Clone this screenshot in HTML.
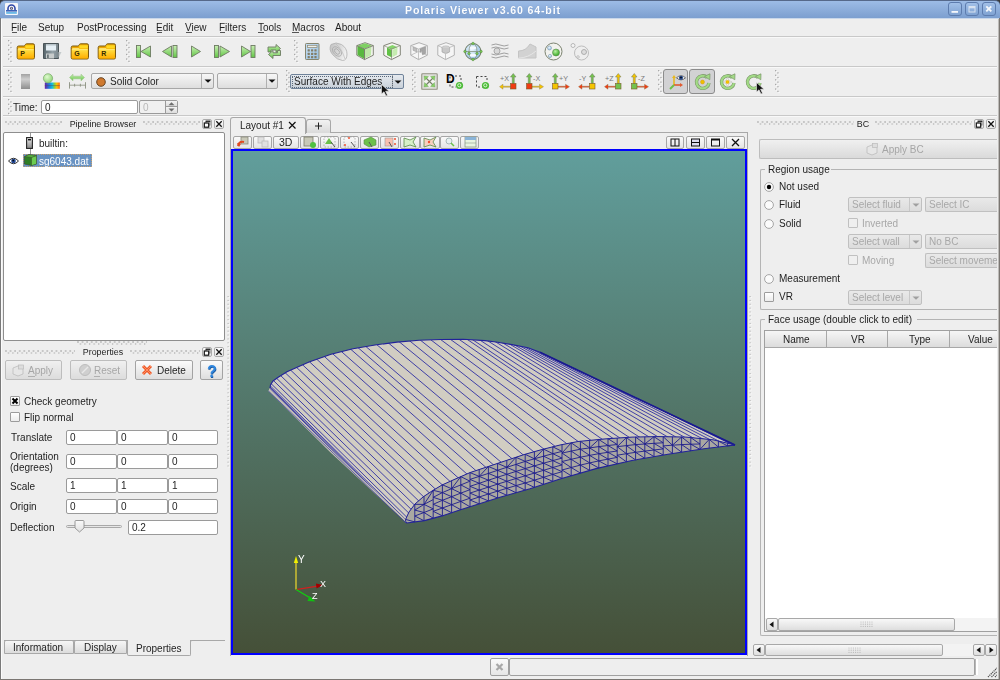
<!DOCTYPE html><html><head><meta charset="utf-8"><style>
*{margin:0;padding:0;box-sizing:border-box}
html,body{width:1000px;height:680px;overflow:hidden;background:#eeeeee;font-family:"Liberation Sans",sans-serif}
body>div,.a{position:absolute}
.t{position:absolute;white-space:pre;will-change:transform}
.btn{position:absolute;border:1px solid #a3a3a3;border-radius:2px;background:linear-gradient(#fbfbfb,#e3e3e3)}
.inp{position:absolute;border:1px solid #9a9a9a;border-radius:2px;background:#fff}
.hl{position:absolute;height:1px;background:#c6c6c6}
svg{position:absolute;overflow:visible}
</style></head><body><svg width="0" height="0" style="position:absolute"><defs>
<linearGradient id="gfold" x1="0" y1="0" x2="0" y2="1"><stop offset="0" stop-color="#ffe680"/><stop offset="0.45" stop-color="#ffc61a"/><stop offset="1" stop-color="#f5a300"/></linearGradient>
<linearGradient id="ggreen" x1="0" y1="0" x2="0" y2="1"><stop offset="0" stop-color="#c9efb4"/><stop offset="1" stop-color="#62c646"/></linearGradient>
<linearGradient id="ggray" x1="0" y1="0" x2="0" y2="1"><stop offset="0" stop-color="#dadada"/><stop offset="1" stop-color="#8f8f8f"/></linearGradient>
<radialGradient id="gball" cx="0.4" cy="0.35" r="0.6"><stop offset="0" stop-color="#b8f0a0"/><stop offset="1" stop-color="#3fae2a"/></radialGradient>
<radialGradient id="gblue" cx="0.4" cy="0.35" r="0.6"><stop offset="0" stop-color="#f0f8ff"/><stop offset="1" stop-color="#9cc4e4"/></radialGradient>
<linearGradient id="gbtn" x1="0" y1="0" x2="0" y2="1"><stop offset="0" stop-color="#fafafa"/><stop offset="1" stop-color="#e0e0e0"/></linearGradient>
</defs></svg><div style="left:0px;top:0px;width:1000px;height:8px;background:#3a3a3a"></div>
<div style="left:0px;top:0px;width:1000px;height:19px;background:linear-gradient(#9dbce6,#7a9dce);border-top:1px solid #56698a;border-radius:5px 5px 0 0"></div>
<div style="left:0px;top:18px;width:1000px;height:1px;background:#c9d7ea"></div>
<div style="left:5px;top:3px;width:13px;height:12px;background:#f6f7f9;border-radius:1px"></div>
<svg style="left:5px;top:3px" width="13" height="12" viewBox="0 0 13 12"><path d="M3 7.5 L3 5.5 A3.5 3.5 0 0 1 10 5.5 L10 7.5" fill="none" stroke="#3048a8" stroke-width="1.6"/><circle cx="6.5" cy="5.3" r="1.5" fill="#4a4a6a"/><circle cx="6.5" cy="5.3" r="0.7" fill="#c8c8d8"/><rect x="1" y="7" width="11" height="1.6" fill="#3a62b8"/><rect x="1.2" y="9.3" width="10.6" height="1.3" fill="#30a0e0"/></svg>
<div class="t" style="left:405px;top:4.73px;font-size:10.6px;line-height:10.6px;color:#fbfdff;font-weight:bold;letter-spacing:0.85px;text-shadow:0 0 1px #6d8cbc">Polaris Viewer v3.60 64-bit</div>
<div style="left:948px;top:2px;width:13.5px;height:14px;border:1px solid #5d7cae;border-radius:3px;background:linear-gradient(#a2c0e8,#7fa2d2)"></div>
<div style="left:965px;top:2px;width:13.5px;height:14px;border:1px solid #5d7cae;border-radius:3px;background:linear-gradient(#a2c0e8,#7fa2d2)"></div>
<div style="left:982px;top:2px;width:13.5px;height:14px;border:1px solid #5d7cae;border-radius:3px;background:linear-gradient(#a2c0e8,#7fa2d2)"></div>
<svg style="left:948px;top:2px" width="14" height="14"><rect x="3.5" y="9" width="6.5" height="1.8" fill="#f4f7fb"/></svg>
<svg style="left:965px;top:2px" width="14" height="14"><rect x="4" y="4.5" width="6" height="5.5" fill="none" stroke="#d8e2f0" stroke-width="1"/><rect x="4" y="4.5" width="6" height="1.8" fill="#d8e2f0"/></svg>
<svg style="left:982px;top:2px" width="14" height="14"><path d="M4.3 4.3 L9.3 9.3 M9.3 4.3 L4.3 9.3" stroke="#f4f7fb" stroke-width="1.9"/></svg>
<div style="left:0px;top:18px;width:1px;height:662px;background:#7a7a7a"></div>
<div style="left:1px;top:19px;width:1px;height:660px;background:#fbfbfb"></div>
<div style="left:999px;top:18px;width:1px;height:662px;background:#7a7a7a"></div>
<div style="left:0px;top:679px;width:1000px;height:1px;background:#7a7a7a"></div>
<div class="t" style="left:11px;top:22.73px;font-size:10px;line-height:10px;color:#1e1e1e;">File</div>
<div class="t" style="left:37.5px;top:22.73px;font-size:10px;line-height:10px;color:#1e1e1e;">Setup</div>
<div class="t" style="left:76.5px;top:22.73px;font-size:10px;line-height:10px;color:#1e1e1e;">PostProcessing</div>
<div class="t" style="left:156px;top:22.73px;font-size:10px;line-height:10px;color:#1e1e1e;">Edit</div>
<div class="t" style="left:185px;top:22.73px;font-size:10px;line-height:10px;color:#1e1e1e;">View</div>
<div class="t" style="left:219px;top:22.73px;font-size:10px;line-height:10px;color:#1e1e1e;">Filters</div>
<div class="t" style="left:257.5px;top:22.73px;font-size:10px;line-height:10px;color:#1e1e1e;">Tools</div>
<div class="t" style="left:291.5px;top:22.73px;font-size:10px;line-height:10px;color:#1e1e1e;">Macros</div>
<div class="t" style="left:335px;top:22.73px;font-size:10px;line-height:10px;color:#1e1e1e;">About</div>
<div style="left:11.5px;top:31.5px;width:5px;height:1px;background:#555"></div>
<div style="left:156.5px;top:31.5px;width:5.5px;height:1px;background:#555"></div>
<div style="left:185.5px;top:31.5px;width:6px;height:1px;background:#555"></div>
<div style="left:219.5px;top:31.5px;width:5px;height:1px;background:#555"></div>
<div style="left:258px;top:31.5px;width:5.5px;height:1px;background:#555"></div>
<div style="left:292px;top:31.5px;width:7px;height:1px;background:#555"></div>
<div style="left:3px;top:36px;width:995px;height:1px;background:#c8c8c8"></div>
<div style="left:3px;top:37px;width:995px;height:1px;background:#f8f8f8"></div>
<div style="left:3px;top:66px;width:995px;height:1px;background:#c8c8c8"></div>
<div style="left:3px;top:67px;width:995px;height:1px;background:#f8f8f8"></div>
<div style="left:3px;top:96px;width:995px;height:1px;background:#c8c8c8"></div>
<div style="left:3px;top:97px;width:995px;height:1px;background:#f8f8f8"></div>
<div style="left:3px;top:115px;width:995px;height:1px;background:#c8c8c8"></div>
<div style="left:3px;top:116px;width:995px;height:1px;background:#f8f8f8"></div>
<svg style="left:8px;top:40px;" width="5" height="24" viewBox="0 0 5 24"><rect x="0" y="0.0" width="1.3" height="1.3" fill="#a8a8a8"/><rect x="1.2" y="1.2" width="1" height="1" fill="#ffffff"/><rect x="2.3" y="2.3" width="1.3" height="1.3" fill="#a8a8a8"/><rect x="3.5" y="3.5" width="1" height="1" fill="#ffffff"/><rect x="0" y="4.6" width="1.3" height="1.3" fill="#a8a8a8"/><rect x="1.2" y="5.8" width="1" height="1" fill="#ffffff"/><rect x="2.3" y="6.9" width="1.3" height="1.3" fill="#a8a8a8"/><rect x="3.5" y="8.1" width="1" height="1" fill="#ffffff"/><rect x="0" y="9.2" width="1.3" height="1.3" fill="#a8a8a8"/><rect x="1.2" y="10.4" width="1" height="1" fill="#ffffff"/><rect x="2.3" y="11.5" width="1.3" height="1.3" fill="#a8a8a8"/><rect x="3.5" y="12.7" width="1" height="1" fill="#ffffff"/><rect x="0" y="13.8" width="1.3" height="1.3" fill="#a8a8a8"/><rect x="1.2" y="15.0" width="1" height="1" fill="#ffffff"/><rect x="2.3" y="16.1" width="1.3" height="1.3" fill="#a8a8a8"/><rect x="3.5" y="17.3" width="1" height="1" fill="#ffffff"/><rect x="0" y="18.4" width="1.3" height="1.3" fill="#a8a8a8"/><rect x="1.2" y="19.6" width="1" height="1" fill="#ffffff"/><rect x="2.3" y="20.7" width="1.3" height="1.3" fill="#a8a8a8"/><rect x="3.5" y="21.9" width="1" height="1" fill="#ffffff"/></svg>
<svg style="left:126px;top:40px;" width="5" height="24" viewBox="0 0 5 24"><rect x="0" y="0.0" width="1.3" height="1.3" fill="#a8a8a8"/><rect x="1.2" y="1.2" width="1" height="1" fill="#ffffff"/><rect x="2.3" y="2.3" width="1.3" height="1.3" fill="#a8a8a8"/><rect x="3.5" y="3.5" width="1" height="1" fill="#ffffff"/><rect x="0" y="4.6" width="1.3" height="1.3" fill="#a8a8a8"/><rect x="1.2" y="5.8" width="1" height="1" fill="#ffffff"/><rect x="2.3" y="6.9" width="1.3" height="1.3" fill="#a8a8a8"/><rect x="3.5" y="8.1" width="1" height="1" fill="#ffffff"/><rect x="0" y="9.2" width="1.3" height="1.3" fill="#a8a8a8"/><rect x="1.2" y="10.4" width="1" height="1" fill="#ffffff"/><rect x="2.3" y="11.5" width="1.3" height="1.3" fill="#a8a8a8"/><rect x="3.5" y="12.7" width="1" height="1" fill="#ffffff"/><rect x="0" y="13.8" width="1.3" height="1.3" fill="#a8a8a8"/><rect x="1.2" y="15.0" width="1" height="1" fill="#ffffff"/><rect x="2.3" y="16.1" width="1.3" height="1.3" fill="#a8a8a8"/><rect x="3.5" y="17.3" width="1" height="1" fill="#ffffff"/><rect x="0" y="18.4" width="1.3" height="1.3" fill="#a8a8a8"/><rect x="1.2" y="19.6" width="1" height="1" fill="#ffffff"/><rect x="2.3" y="20.7" width="1.3" height="1.3" fill="#a8a8a8"/><rect x="3.5" y="21.9" width="1" height="1" fill="#ffffff"/></svg>
<svg style="left:293.5px;top:40px;" width="5" height="24" viewBox="0 0 5 24"><rect x="0" y="0.0" width="1.3" height="1.3" fill="#a8a8a8"/><rect x="1.2" y="1.2" width="1" height="1" fill="#ffffff"/><rect x="2.3" y="2.3" width="1.3" height="1.3" fill="#a8a8a8"/><rect x="3.5" y="3.5" width="1" height="1" fill="#ffffff"/><rect x="0" y="4.6" width="1.3" height="1.3" fill="#a8a8a8"/><rect x="1.2" y="5.8" width="1" height="1" fill="#ffffff"/><rect x="2.3" y="6.9" width="1.3" height="1.3" fill="#a8a8a8"/><rect x="3.5" y="8.1" width="1" height="1" fill="#ffffff"/><rect x="0" y="9.2" width="1.3" height="1.3" fill="#a8a8a8"/><rect x="1.2" y="10.4" width="1" height="1" fill="#ffffff"/><rect x="2.3" y="11.5" width="1.3" height="1.3" fill="#a8a8a8"/><rect x="3.5" y="12.7" width="1" height="1" fill="#ffffff"/><rect x="0" y="13.8" width="1.3" height="1.3" fill="#a8a8a8"/><rect x="1.2" y="15.0" width="1" height="1" fill="#ffffff"/><rect x="2.3" y="16.1" width="1.3" height="1.3" fill="#a8a8a8"/><rect x="3.5" y="17.3" width="1" height="1" fill="#ffffff"/><rect x="0" y="18.4" width="1.3" height="1.3" fill="#a8a8a8"/><rect x="1.2" y="19.6" width="1" height="1" fill="#ffffff"/><rect x="2.3" y="20.7" width="1.3" height="1.3" fill="#a8a8a8"/><rect x="3.5" y="21.9" width="1" height="1" fill="#ffffff"/></svg>
<svg style="left:8px;top:70px;" width="5" height="24" viewBox="0 0 5 24"><rect x="0" y="0.0" width="1.3" height="1.3" fill="#a8a8a8"/><rect x="1.2" y="1.2" width="1" height="1" fill="#ffffff"/><rect x="2.3" y="2.3" width="1.3" height="1.3" fill="#a8a8a8"/><rect x="3.5" y="3.5" width="1" height="1" fill="#ffffff"/><rect x="0" y="4.6" width="1.3" height="1.3" fill="#a8a8a8"/><rect x="1.2" y="5.8" width="1" height="1" fill="#ffffff"/><rect x="2.3" y="6.9" width="1.3" height="1.3" fill="#a8a8a8"/><rect x="3.5" y="8.1" width="1" height="1" fill="#ffffff"/><rect x="0" y="9.2" width="1.3" height="1.3" fill="#a8a8a8"/><rect x="1.2" y="10.4" width="1" height="1" fill="#ffffff"/><rect x="2.3" y="11.5" width="1.3" height="1.3" fill="#a8a8a8"/><rect x="3.5" y="12.7" width="1" height="1" fill="#ffffff"/><rect x="0" y="13.8" width="1.3" height="1.3" fill="#a8a8a8"/><rect x="1.2" y="15.0" width="1" height="1" fill="#ffffff"/><rect x="2.3" y="16.1" width="1.3" height="1.3" fill="#a8a8a8"/><rect x="3.5" y="17.3" width="1" height="1" fill="#ffffff"/><rect x="0" y="18.4" width="1.3" height="1.3" fill="#a8a8a8"/><rect x="1.2" y="19.6" width="1" height="1" fill="#ffffff"/><rect x="2.3" y="20.7" width="1.3" height="1.3" fill="#a8a8a8"/><rect x="3.5" y="21.9" width="1" height="1" fill="#ffffff"/></svg>
<svg style="left:286px;top:70px;" width="5" height="24" viewBox="0 0 5 24"><rect x="0" y="0.0" width="1.3" height="1.3" fill="#a8a8a8"/><rect x="1.2" y="1.2" width="1" height="1" fill="#ffffff"/><rect x="2.3" y="2.3" width="1.3" height="1.3" fill="#a8a8a8"/><rect x="3.5" y="3.5" width="1" height="1" fill="#ffffff"/><rect x="0" y="4.6" width="1.3" height="1.3" fill="#a8a8a8"/><rect x="1.2" y="5.8" width="1" height="1" fill="#ffffff"/><rect x="2.3" y="6.9" width="1.3" height="1.3" fill="#a8a8a8"/><rect x="3.5" y="8.1" width="1" height="1" fill="#ffffff"/><rect x="0" y="9.2" width="1.3" height="1.3" fill="#a8a8a8"/><rect x="1.2" y="10.4" width="1" height="1" fill="#ffffff"/><rect x="2.3" y="11.5" width="1.3" height="1.3" fill="#a8a8a8"/><rect x="3.5" y="12.7" width="1" height="1" fill="#ffffff"/><rect x="0" y="13.8" width="1.3" height="1.3" fill="#a8a8a8"/><rect x="1.2" y="15.0" width="1" height="1" fill="#ffffff"/><rect x="2.3" y="16.1" width="1.3" height="1.3" fill="#a8a8a8"/><rect x="3.5" y="17.3" width="1" height="1" fill="#ffffff"/><rect x="0" y="18.4" width="1.3" height="1.3" fill="#a8a8a8"/><rect x="1.2" y="19.6" width="1" height="1" fill="#ffffff"/><rect x="2.3" y="20.7" width="1.3" height="1.3" fill="#a8a8a8"/><rect x="3.5" y="21.9" width="1" height="1" fill="#ffffff"/></svg>
<svg style="left:412px;top:70px;" width="5" height="24" viewBox="0 0 5 24"><rect x="0" y="0.0" width="1.3" height="1.3" fill="#a8a8a8"/><rect x="1.2" y="1.2" width="1" height="1" fill="#ffffff"/><rect x="2.3" y="2.3" width="1.3" height="1.3" fill="#a8a8a8"/><rect x="3.5" y="3.5" width="1" height="1" fill="#ffffff"/><rect x="0" y="4.6" width="1.3" height="1.3" fill="#a8a8a8"/><rect x="1.2" y="5.8" width="1" height="1" fill="#ffffff"/><rect x="2.3" y="6.9" width="1.3" height="1.3" fill="#a8a8a8"/><rect x="3.5" y="8.1" width="1" height="1" fill="#ffffff"/><rect x="0" y="9.2" width="1.3" height="1.3" fill="#a8a8a8"/><rect x="1.2" y="10.4" width="1" height="1" fill="#ffffff"/><rect x="2.3" y="11.5" width="1.3" height="1.3" fill="#a8a8a8"/><rect x="3.5" y="12.7" width="1" height="1" fill="#ffffff"/><rect x="0" y="13.8" width="1.3" height="1.3" fill="#a8a8a8"/><rect x="1.2" y="15.0" width="1" height="1" fill="#ffffff"/><rect x="2.3" y="16.1" width="1.3" height="1.3" fill="#a8a8a8"/><rect x="3.5" y="17.3" width="1" height="1" fill="#ffffff"/><rect x="0" y="18.4" width="1.3" height="1.3" fill="#a8a8a8"/><rect x="1.2" y="19.6" width="1" height="1" fill="#ffffff"/><rect x="2.3" y="20.7" width="1.3" height="1.3" fill="#a8a8a8"/><rect x="3.5" y="21.9" width="1" height="1" fill="#ffffff"/></svg>
<svg style="left:658px;top:70px;" width="5" height="24" viewBox="0 0 5 24"><rect x="0" y="0.0" width="1.3" height="1.3" fill="#a8a8a8"/><rect x="1.2" y="1.2" width="1" height="1" fill="#ffffff"/><rect x="2.3" y="2.3" width="1.3" height="1.3" fill="#a8a8a8"/><rect x="3.5" y="3.5" width="1" height="1" fill="#ffffff"/><rect x="0" y="4.6" width="1.3" height="1.3" fill="#a8a8a8"/><rect x="1.2" y="5.8" width="1" height="1" fill="#ffffff"/><rect x="2.3" y="6.9" width="1.3" height="1.3" fill="#a8a8a8"/><rect x="3.5" y="8.1" width="1" height="1" fill="#ffffff"/><rect x="0" y="9.2" width="1.3" height="1.3" fill="#a8a8a8"/><rect x="1.2" y="10.4" width="1" height="1" fill="#ffffff"/><rect x="2.3" y="11.5" width="1.3" height="1.3" fill="#a8a8a8"/><rect x="3.5" y="12.7" width="1" height="1" fill="#ffffff"/><rect x="0" y="13.8" width="1.3" height="1.3" fill="#a8a8a8"/><rect x="1.2" y="15.0" width="1" height="1" fill="#ffffff"/><rect x="2.3" y="16.1" width="1.3" height="1.3" fill="#a8a8a8"/><rect x="3.5" y="17.3" width="1" height="1" fill="#ffffff"/><rect x="0" y="18.4" width="1.3" height="1.3" fill="#a8a8a8"/><rect x="1.2" y="19.6" width="1" height="1" fill="#ffffff"/><rect x="2.3" y="20.7" width="1.3" height="1.3" fill="#a8a8a8"/><rect x="3.5" y="21.9" width="1" height="1" fill="#ffffff"/></svg>
<svg style="left:775px;top:70px;" width="5" height="24" viewBox="0 0 5 24"><rect x="0" y="0.0" width="1.3" height="1.3" fill="#a8a8a8"/><rect x="1.2" y="1.2" width="1" height="1" fill="#ffffff"/><rect x="2.3" y="2.3" width="1.3" height="1.3" fill="#a8a8a8"/><rect x="3.5" y="3.5" width="1" height="1" fill="#ffffff"/><rect x="0" y="4.6" width="1.3" height="1.3" fill="#a8a8a8"/><rect x="1.2" y="5.8" width="1" height="1" fill="#ffffff"/><rect x="2.3" y="6.9" width="1.3" height="1.3" fill="#a8a8a8"/><rect x="3.5" y="8.1" width="1" height="1" fill="#ffffff"/><rect x="0" y="9.2" width="1.3" height="1.3" fill="#a8a8a8"/><rect x="1.2" y="10.4" width="1" height="1" fill="#ffffff"/><rect x="2.3" y="11.5" width="1.3" height="1.3" fill="#a8a8a8"/><rect x="3.5" y="12.7" width="1" height="1" fill="#ffffff"/><rect x="0" y="13.8" width="1.3" height="1.3" fill="#a8a8a8"/><rect x="1.2" y="15.0" width="1" height="1" fill="#ffffff"/><rect x="2.3" y="16.1" width="1.3" height="1.3" fill="#a8a8a8"/><rect x="3.5" y="17.3" width="1" height="1" fill="#ffffff"/><rect x="0" y="18.4" width="1.3" height="1.3" fill="#a8a8a8"/><rect x="1.2" y="19.6" width="1" height="1" fill="#ffffff"/><rect x="2.3" y="20.7" width="1.3" height="1.3" fill="#a8a8a8"/><rect x="3.5" y="21.9" width="1" height="1" fill="#ffffff"/></svg>
<svg style="left:8px;top:99px;" width="5" height="16" viewBox="0 0 5 16"><rect x="0" y="0.0" width="1.3" height="1.3" fill="#a8a8a8"/><rect x="1.2" y="1.2" width="1" height="1" fill="#ffffff"/><rect x="2.3" y="2.3" width="1.3" height="1.3" fill="#a8a8a8"/><rect x="3.5" y="3.5" width="1" height="1" fill="#ffffff"/><rect x="0" y="4.6" width="1.3" height="1.3" fill="#a8a8a8"/><rect x="1.2" y="5.8" width="1" height="1" fill="#ffffff"/><rect x="2.3" y="6.9" width="1.3" height="1.3" fill="#a8a8a8"/><rect x="3.5" y="8.1" width="1" height="1" fill="#ffffff"/><rect x="0" y="9.2" width="1.3" height="1.3" fill="#a8a8a8"/><rect x="1.2" y="10.4" width="1" height="1" fill="#ffffff"/><rect x="2.3" y="11.5" width="1.3" height="1.3" fill="#a8a8a8"/><rect x="3.5" y="12.7" width="1" height="1" fill="#ffffff"/><rect x="0" y="13.8" width="1.3" height="1.3" fill="#a8a8a8"/><rect x="1.2" y="15.0" width="1" height="1" fill="#ffffff"/></svg>
<div class="t" style="left:12.5px;top:102.73px;font-size:10px;line-height:10px;color:#1e1e1e;">Time:</div>
<div class="inp" style="left:41px;top:100px;width:97px;height:14px;"></div>
<div class="t" style="left:45px;top:102.73px;font-size:10px;line-height:10px;color:#1e1e1e;">0</div>
<div class="inp" style="left:138.5px;top:99.5px;width:39.5px;height:14.5px;background:#f0f0f0;border-color:#9a9a9a"></div>
<div class="t" style="left:143px;top:102.73px;font-size:10px;line-height:10px;color:#b8b8b8;">0</div>
<div style="left:165px;top:100.5px;width:12px;height:6px;border-left:1px solid #9a9a9a;border-bottom:1px solid #9a9a9a;background:linear-gradient(#f4f4f4,#dcdcdc)"></div>
<div style="left:165px;top:106.5px;width:12px;height:6px;border-left:1px solid #9a9a9a;background:linear-gradient(#f4f4f4,#dcdcdc)"></div>
<svg style="left:165px;top:100px;" width="13" height="14" viewBox="0 0 13 14"><path d="M3.5 5.3 L6.5 2.3 L9.5 5.3Z M3.5 8.6 L6.5 11.6 L9.5 8.6Z" fill="#6e6e6e"/></svg>
<svg style="left:16px;top:43px;" width="20" height="17" viewBox="0 0 20 17"><defs><linearGradient id="gflP" x1="0" y1="0" x2="0" y2="1"><stop offset="0" stop-color="#fff4a0"/><stop offset="0.25" stop-color="#ffd83a"/><stop offset="1" stop-color="#ffae00"/></linearGradient></defs><path d="M1.2 4.5 Q1.2 3 2.7 3 L7.8 3 Q8.8 3 9.2 2 L9.5 1.3 Q9.8 0.8 10.5 0.8 L17 0.8 Q18.5 0.8 18.5 2.3 L18.5 14.5 Q18.5 16 17 16 L2.7 16 Q1.2 16 1.2 14.5Z" fill="#f0a800" stroke="#7a5a10" stroke-width="1"/><path d="M9.2 2.2 L17.8 2.2 L17.8 5.5 L9.5 5.5Z" fill="#ffd820"/><path d="M1.8 6.3 Q1.8 5.2 3 5.2 L9 5.2 L9.5 6 L17.8 6 L17.8 14.8 Q17.8 15.4 17.2 15.4 L2.4 15.4 Q1.8 15.4 1.8 14.8Z" fill="url(#gflP)"/><text x="4.3" y="13" font-family="Liberation Sans" font-weight="bold" font-size="7" fill="#3a2c00">P</text></svg>
<svg style="left:70px;top:43px;" width="20" height="17" viewBox="0 0 20 17"><defs><linearGradient id="gflG" x1="0" y1="0" x2="0" y2="1"><stop offset="0" stop-color="#fff4a0"/><stop offset="0.25" stop-color="#ffd83a"/><stop offset="1" stop-color="#ffae00"/></linearGradient></defs><path d="M1.2 4.5 Q1.2 3 2.7 3 L7.8 3 Q8.8 3 9.2 2 L9.5 1.3 Q9.8 0.8 10.5 0.8 L17 0.8 Q18.5 0.8 18.5 2.3 L18.5 14.5 Q18.5 16 17 16 L2.7 16 Q1.2 16 1.2 14.5Z" fill="#f0a800" stroke="#7a5a10" stroke-width="1"/><path d="M9.2 2.2 L17.8 2.2 L17.8 5.5 L9.5 5.5Z" fill="#ffd820"/><path d="M1.8 6.3 Q1.8 5.2 3 5.2 L9 5.2 L9.5 6 L17.8 6 L17.8 14.8 Q17.8 15.4 17.2 15.4 L2.4 15.4 Q1.8 15.4 1.8 14.8Z" fill="url(#gflG)"/><text x="4.3" y="13" font-family="Liberation Sans" font-weight="bold" font-size="7" fill="#3a2c00">G</text></svg>
<svg style="left:97px;top:43px;" width="20" height="17" viewBox="0 0 20 17"><defs><linearGradient id="gflR" x1="0" y1="0" x2="0" y2="1"><stop offset="0" stop-color="#fff4a0"/><stop offset="0.25" stop-color="#ffd83a"/><stop offset="1" stop-color="#ffae00"/></linearGradient></defs><path d="M1.2 4.5 Q1.2 3 2.7 3 L7.8 3 Q8.8 3 9.2 2 L9.5 1.3 Q9.8 0.8 10.5 0.8 L17 0.8 Q18.5 0.8 18.5 2.3 L18.5 14.5 Q18.5 16 17 16 L2.7 16 Q1.2 16 1.2 14.5Z" fill="#f0a800" stroke="#7a5a10" stroke-width="1"/><path d="M9.2 2.2 L17.8 2.2 L17.8 5.5 L9.5 5.5Z" fill="#ffd820"/><path d="M1.8 6.3 Q1.8 5.2 3 5.2 L9 5.2 L9.5 6 L17.8 6 L17.8 14.8 Q17.8 15.4 17.2 15.4 L2.4 15.4 Q1.8 15.4 1.8 14.8Z" fill="url(#gflR)"/><text x="4.3" y="13" font-family="Liberation Sans" font-weight="bold" font-size="7" fill="#3a2c00">R</text></svg>
<svg style="left:43px;top:43px;" width="19" height="17" viewBox="0 0 19 17"><defs><linearGradient id="gflop" x1="0" y1="0" x2="1" y2="0"><stop offset="0" stop-color="#56646a"/><stop offset="0.6" stop-color="#95a2a8"/><stop offset="1" stop-color="#7a868c"/></linearGradient></defs><path d="M0.5 0.5 L15.5 0.5 L15.5 15.5 L0.5 15.5Z" fill="url(#gflop)" stroke="#4a5458"/><rect x="3" y="1" width="10" height="6.5" fill="#e6f0f6"/><rect x="3" y="1" width="10" height="1.5" fill="#b8c4ca"/><rect x="3" y="10.5" width="8" height="5" fill="#c8cccc"/><rect x="4" y="11.5" width="1.8" height="3.5" fill="#6a7478"/><path d="M15.5 9 L18.5 9 L15.5 15Z" fill="#c4cacc"/></svg>
<svg style="left:136px;top:45px;" width="16" height="14" viewBox="0 0 16 14"><rect x="0.5" y="0.5" width="4" height="12" fill="url(#ggreen)" stroke="#6d7a62" stroke-width="0.9"/><path d="M14.5 1 L14.5 12 L5 6.5Z" fill="url(#ggreen)" stroke="#6d7a62" stroke-width="0.9"/></svg>
<svg style="left:162px;top:45px;" width="16" height="14" viewBox="0 0 16 14"><path d="M9.5 1 L9.5 12 L0.5 6.5Z" fill="url(#ggreen)" stroke="#6d7a62" stroke-width="0.9"/><rect x="11" y="0.5" width="4" height="12" fill="url(#ggreen)" stroke="#6d7a62" stroke-width="0.9"/></svg>
<svg style="left:191px;top:45px;" width="16" height="14" viewBox="0 0 16 14"><path d="M0.5 1 L0.5 12 L9.5 6.5Z" fill="url(#ggreen)" stroke="#6d7a62" stroke-width="0.9"/></svg>
<svg style="left:214px;top:45px;" width="16" height="14" viewBox="0 0 16 14"><rect x="0.5" y="0.5" width="4" height="12" fill="url(#ggreen)" stroke="#6d7a62" stroke-width="0.9"/><path d="M6 1 L6 12 L15.5 6.5Z" fill="url(#ggreen)" stroke="#6d7a62" stroke-width="0.9"/></svg>
<svg style="left:241px;top:45px;" width="16" height="14" viewBox="0 0 16 14"><path d="M0.5 1 L0.5 12 L9.5 6.5Z" fill="url(#ggreen)" stroke="#6d7a62" stroke-width="0.9"/><rect x="10" y="0.5" width="4" height="12" fill="url(#ggreen)" stroke="#6d7a62" stroke-width="0.9"/></svg>
<svg style="left:267px;top:43px;" width="16" height="17" viewBox="0 0 16 17"><path d="M1 9 L1 4 L9 4 L9 1.5 L13.5 5.5 L9 9.5 L9 7 L4 7 L4 9Z" fill="url(#ggreen)" stroke="#6d7a62" stroke-width="0.9"/><path d="M13.5 7.5 L13.5 12.5 L6 12.5 L6 15.5 L1.5 11.5 L6 7.5 L6 9.8 L10.5 9.8 L10.5 7.5Z" fill="url(#ggreen)" stroke="#6d7a62" stroke-width="0.9"/></svg>
<svg style="left:305px;top:43px;" width="15" height="17" viewBox="0 0 15 17"><defs><linearGradient id="gcalc" x1="0" y1="0" x2="1" y2="1"><stop offset="0" stop-color="#c8e0f4"/><stop offset="1" stop-color="#98c0e0"/></linearGradient></defs><rect x="0.5" y="0.5" width="13.5" height="16" rx="0.8" fill="url(#gcalc)" stroke="#86856e"/><rect x="2.5" y="2.3" width="9.5" height="2.2" fill="#f0f0e8" stroke="#8a8670" stroke-width="0.7"/><rect x="2.6" y="6.3" width="2.2" height="2.2" rx="0.5" fill="#847e68"/><rect x="2.6" y="9.7" width="2.2" height="2.2" rx="0.5" fill="#847e68"/><rect x="2.6" y="13.1" width="2.2" height="2.2" rx="0.5" fill="#847e68"/><rect x="6.0" y="6.3" width="2.2" height="2.2" rx="0.5" fill="#847e68"/><rect x="6.0" y="9.7" width="2.2" height="2.2" rx="0.5" fill="#847e68"/><rect x="6.0" y="13.1" width="2.2" height="2.2" rx="0.5" fill="#847e68"/><rect x="9.4" y="6.3" width="2.2" height="2.2" rx="0.5" fill="#847e68"/><rect x="9.4" y="9.7" width="2.2" height="2.2" rx="0.5" fill="#847e68"/><rect x="9.4" y="13.1" width="2.2" height="2.2" rx="0.5" fill="#847e68"/></svg>
<svg style="left:328px;top:42px;" width="20" height="20" viewBox="0 0 20 20"><defs><linearGradient id="gdome" x1="0" y1="0" x2="1" y2="0.3"><stop offset="0" stop-color="#c4c4c4"/><stop offset="0.6" stop-color="#d8d8d8"/><stop offset="1" stop-color="#f0f0f0"/></linearGradient></defs><path d="M3 2.5 Q8 -0.5 13.5 2.5 Q19 6 19 12 Q19 18.5 14.5 18.5 Q9 18 4.5 12.5 Q0.5 7.5 3 2.5Z" fill="url(#gdome)" stroke="#b0b0b0" stroke-width="0.8"/><ellipse cx="9" cy="9.5" rx="5.5" ry="3.6" transform="rotate(48 9 9.5)" fill="none" stroke="#aaaaaa" stroke-width="0.8"/><ellipse cx="9" cy="9.5" rx="3.2" ry="2" transform="rotate(48 9 9.5)" fill="none" stroke="#a8a8a8" stroke-width="0.8"/><path d="M8 2 Q14 7 17 17" fill="none" stroke="#bcbcbc" stroke-width="0.7"/></svg>
<svg style="left:356px;top:42px;" width="18" height="19" viewBox="0 0 18 19"><path d="M9 0.7 L17.3 3.6 L17.3 13.2 L8.5 17.6 L0.8 13.2 L0.8 3.6Z" fill="#f6f6f2" stroke="#76786a" stroke-width="0.9"/><path d="M1.5 4 L8.5 7 L8.5 17 L1.5 13Z" fill="#58b83e"/><path d="M8.5 7 L15.5 4.5 L15 13 L8.5 16.5Z" fill="url(#gblue)" opacity="0"/><path d="M8.8 7 L15.5 4.6 L15 13.2 L8.8 16.4Z" fill="#bfe8a8"/><path d="M1.5 3.8 L9 1.2 L15.8 3.8 L8.5 6.8Z" fill="#7ed062"/><path d="M0.8 3.6 L8.5 7 L17.3 3.6 M8.5 7 L8.5 17.6" fill="none" stroke="#76786a" stroke-width="0.9"/></svg>
<svg style="left:383px;top:42px;" width="18" height="19" viewBox="0 0 18 19"><path d="M9 0.7 L17.3 3.6 L17.3 13.2 L8.5 17.6 L0.8 13.2 L0.8 3.6Z" fill="#f6f6f2" stroke="#76786a" stroke-width="0.9"/><path d="M4 5.5 L9 8 L9 15.5 L4 13Z" fill="#62c246"/><path d="M9.3 8 L14.5 5.5 L14.2 12.5 L9.3 15.3Z" fill="#c6ecb0"/><path d="M4 5.3 L9.5 3 L14.5 5.3 L9 7.6Z" fill="#86d66a"/><path d="M0.8 3.6 L8.5 7 L17.3 3.6 M8.5 7 L8.5 17.6" fill="none" stroke="#8a8c7e" stroke-width="0.7"/></svg>
<svg style="left:410px;top:42px;" width="18" height="19" viewBox="0 0 18 19"><path d="M9 0.7 L17.3 3.6 L17.3 13.2 L8.5 17.6 L0.8 13.2 L0.8 3.6Z" fill="#f6f6f6" stroke="#a8a8a8" stroke-width="0.9"/><path d="M0.8 3.6 L8.5 7 L17.3 3.6 M8.5 7 L8.5 17.6 M0.8 13.2 L8.5 9.5 L17.3 13.2" fill="none" stroke="#b8b8b8" stroke-width="0.8"/><path d="M3 5 L7 6.8 L7 10 L3 8.3Z" fill="#c0c0c0" stroke="#999" stroke-width="0.5"/><path d="M10 7 L15.5 4.8 L15.5 11.5 L12.5 12.8 L12.5 9 L10 10Z" fill="#a6a6a6" stroke="#888" stroke-width="0.5"/></svg>
<svg style="left:437px;top:42px;" width="18" height="19" viewBox="0 0 18 19"><path d="M9 0.7 L17.3 3.6 L17.3 13.2 L8.5 17.6 L0.8 13.2 L0.8 3.6Z" fill="#f6f6f6" stroke="#ababab" stroke-width="0.9"/><path d="M0.8 3.6 L8.5 7 L17.3 3.6 M8.5 12 L8.5 17.6" fill="none" stroke="#b8b8b8" stroke-width="0.8"/><ellipse cx="8.8" cy="5.5" rx="3.8" ry="1.6" fill="#d8d8d8" stroke="#a8a8a8" stroke-width="0.6"/><path d="M5 5.5 L5 10 Q8.8 13 12.6 10 L12.6 5.5" fill="#c8c8c8" stroke="#a0a0a0" stroke-width="0.6"/></svg>
<svg style="left:464px;top:42px;" width="18" height="19" viewBox="0 0 18 19"><circle cx="9" cy="9.5" r="8" fill="url(#gblue)" stroke="#6e7a60" stroke-width="1"/><ellipse cx="9" cy="9.5" rx="4" ry="8" fill="none" stroke="#7a8a70" stroke-width="0.7"/><ellipse cx="9" cy="5.8" rx="3.2" ry="1.6" fill="#f6faff"/><ellipse cx="9" cy="13.2" rx="3.2" ry="1.6" fill="#f6faff"/><path d="M1 9.5 L17 9.5" stroke="#7a8a70" stroke-width="0.7"/><circle cx="9" cy="1.5" r="1.3" fill="#78c850" stroke="#4a7a3a" stroke-width="0.4"/><circle cx="1" cy="9.5" r="1.3" fill="#78c850" stroke="#4a7a3a" stroke-width="0.4"/><circle cx="17" cy="9.5" r="1.3" fill="#78c850" stroke="#4a7a3a" stroke-width="0.4"/><circle cx="9" cy="17.5" r="1.3" fill="#78c850" stroke="#4a7a3a" stroke-width="0.4"/><circle cx="5" cy="11.5" r="1.3" fill="#78c850" stroke="#4a7a3a" stroke-width="0.4"/><circle cx="13" cy="11.5" r="1.3" fill="#78c850" stroke="#4a7a3a" stroke-width="0.4"/></svg>
<svg style="left:491px;top:43px;" width="18" height="17" viewBox="0 0 18 17"><path d="M0.5 2 Q5 0 9 2 T17.5 2 M0.5 5 Q5 3 9 5 T17.5 5 M0.5 11 Q5 13 9 11 T17.5 11 M0.5 14 Q5 16 9 14 T17.5 14" fill="none" stroke="#a0a0a0" stroke-width="1"/><circle cx="6" cy="8" r="3" fill="#d8d8d8" stroke="#a8a8a8"/></svg>
<svg style="left:518px;top:43px;" width="19" height="17" viewBox="0 0 19 17"><path d="M0.5 8 Q8 8 12 1 L18 4 L18 15 L0.5 15Z" fill="#d2d2d2" stroke="#c4c4c4"/><path d="M0.5 15 Q10 15 18 8" fill="none" stroke="#e6e6e6" stroke-width="1"/></svg>
<svg style="left:544px;top:42px;" width="19" height="19" viewBox="0 0 19 19"><circle cx="9.5" cy="9.5" r="8.5" fill="#f2f2ee" stroke="#7b8270" stroke-width="1"/><circle cx="12" cy="10.5" r="3.5" fill="url(#gball)" stroke="#5e8a50" stroke-width="0.6"/><circle cx="5.5" cy="6" r="2" fill="url(#gblue)" stroke="#7f9aaf" stroke-width="0.6"/><circle cx="6" cy="14" r="1.6" fill="url(#gblue)" stroke="#7f9aaf" stroke-width="0.6"/></svg>
<svg style="left:570px;top:42px;" width="20" height="19" viewBox="0 0 20 19"><circle cx="3" cy="3.5" r="2" fill="#f4f4f4" stroke="#a8a8a8" stroke-width="0.8"/><circle cx="11.5" cy="11" r="7" fill="none" stroke="#b0b0b0" stroke-width="0.8"/><circle cx="14" cy="10" r="2.5" fill="#ddd" stroke="#a0a0a0" stroke-width="0.8"/><circle cx="8" cy="15" r="1.3" fill="#eee" stroke="#a8a8a8" stroke-width="0.6"/></svg>
<svg style="left:21px;top:74px;" width="9" height="15" viewBox="0 0 9 15"><defs><linearGradient id="grect" x1="0" y1="0" x2="0" y2="1"><stop offset="0" stop-color="#a2a2a2"/><stop offset="0.35" stop-color="#cfcfcf"/><stop offset="1" stop-color="#8e8e8e"/></linearGradient></defs><rect x="0" y="0" width="9" height="15" fill="url(#grect)"/></svg>
<svg style="left:42px;top:73px;" width="19" height="17" viewBox="0 0 19 17"><defs><linearGradient id="grain" x1="0" y1="0" x2="1" y2="0"><stop offset="0" stop-color="#6a1fa8"/><stop offset="0.3" stop-color="#1a7ee0"/><stop offset="0.5" stop-color="#10c0e0"/><stop offset="0.65" stop-color="#8ad040"/><stop offset="0.8" stop-color="#ffc000"/><stop offset="1" stop-color="#ff6a10"/></linearGradient><radialGradient id="gcm" cx="0.4" cy="0.35" r="0.65"><stop offset="0" stop-color="#e0fad0"/><stop offset="1" stop-color="#8ed476"/></radialGradient></defs><rect x="2.8" y="9.5" width="15" height="6.3" fill="url(#grain)"/><rect x="2.8" y="12.2" width="15" height="0.9" fill="#505050" opacity="0.55"/><circle cx="6" cy="5.3" r="4.6" fill="url(#gcm)" stroke="#7aa86a" stroke-width="0.7"/></svg>
<svg style="left:68px;top:73px;" width="19" height="17" viewBox="0 0 19 17"><path d="M1.5 4.5 L5 1.2 L5 3.2 L13 3.2 L13 1.2 L16.5 4.5 L13 7.8 L13 5.8 L5 5.8 L5 7.8Z" fill="url(#ggreen)" stroke="#9cc488" stroke-width="0.6"/><path d="M1.5 12.2 L17.5 12.2" stroke="#8a9080" stroke-width="0.8"/><path d="M1.5 9.2 L1.5 15.6 M17.5 9.2 L17.5 15.6 M6.6 10.8 L6.6 13.6 M12.4 10.8 L12.4 13.6" stroke="#8a9080" stroke-width="0.9"/></svg>
<div style="left:91px;top:73px;width:123px;height:16px;border:1px solid #a7a7a7;border-radius:2px;background:linear-gradient(#f6f6f6,#dedede)"></div>
<div style="left:201px;top:74px;width:1px;height:14px;background:#b0b0b0"></div>
<svg style="left:203.5px;top:79.0px;" width="8" height="4" viewBox="0 0 8 4"><path d="M0.5 0.5 L7.5 0.5 L4 3.8Z" fill="#111"/></svg>
<svg style="left:96px;top:77px;" width="10" height="10" viewBox="0 0 10 10"><circle cx="5" cy="5" r="4.3" fill="#cf7a30" stroke="#5a3a1a" stroke-width="0.9"/></svg>
<div class="t" style="left:110px;top:76.94px;font-size:10px;line-height:10px;color:#1e1e1e;">Solid Color</div>
<div style="left:217px;top:73px;width:61px;height:16px;border:1px solid #a7a7a7;border-radius:2px;background:linear-gradient(#f6f6f6,#dedede)"></div>
<div style="left:266px;top:74px;width:1px;height:14px;background:#b0b0b0"></div>
<svg style="left:268.0px;top:79.0px;" width="8" height="4" viewBox="0 0 8 4"><path d="M0.5 0.5 L7.5 0.5 L4 3.8Z" fill="#111"/></svg>
<div style="left:290px;top:74px;width:114px;height:15px;border:1px solid #6f8299;border-radius:2px;background:linear-gradient(#e6eaef,#c8d0d9)"></div>
<div style="left:392px;top:75px;width:1px;height:13px;background:#b0b0b0"></div>
<svg style="left:394.0px;top:79.5px;" width="8" height="4" viewBox="0 0 8 4"><path d="M0.5 0.5 L7.5 0.5 L4 3.8Z" fill="#111"/></svg>
<div style="left:291.5px;top:75.5px;width:101px;height:12px;border:1px dotted #5a6878"></div>
<div class="t" style="left:293.5px;top:77.23px;font-size:10px;line-height:10px;color:#1e1e1e;">Surface With Edges</div>
<svg style="left:421px;top:73px;" width="17" height="17" viewBox="0 0 17 17"><rect x="0.8" y="0.8" width="15.4" height="15.4" rx="0.8" fill="#f3f3f0" stroke="#a6a69a" stroke-width="1.6"/><rect x="2.2" y="2.2" width="12.6" height="12.6" fill="none" stroke="#d8d8d0" stroke-width="0.8"/><path d="M4.5 4.5 L12.5 12.5 M12.5 4.5 L4.5 12.5" stroke="#767e68" stroke-width="1.1"/><path d="M3 3 L7.5 3.6 L3.6 7.5Z M14 3 L9.5 3.6 L13.4 7.5Z M3 14 L7.5 13.4 L3.6 9.5Z M14 14 L9.5 13.4 L13.4 9.5Z" fill="#86d064" stroke="#6a9a58" stroke-width="0.4"/></svg>
<svg style="left:446px;top:73px;" width="18" height="18" viewBox="0 0 18 18"><text x="0" y="9.6" font-family="Liberation Sans" font-weight="bold" font-size="12" fill="#000">D</text><path d="M4 3.5 L4 14 L10 14 M9 3 L15 3 L15 10" fill="none" stroke="#444" stroke-width="1" stroke-dasharray="2 2"/><circle cx="13.5" cy="12.5" r="3.6" fill="#4dbb3a"/><circle cx="13.3" cy="12.3" r="1.6" fill="none" stroke="#e8ffe0" stroke-width="0.9"/></svg>
<svg style="left:476px;top:73px;" width="16" height="18" viewBox="0 0 16 18"><path d="M0.5 3.5 L0.5 14 L7 14 M0.5 3.5 L11 3.5 L11 9" fill="none" stroke="#444" stroke-width="1" stroke-dasharray="2 2"/><circle cx="9.5" cy="12.5" r="3.6" fill="#4dbb3a"/><circle cx="9.3" cy="12.3" r="1.6" fill="none" stroke="#e8ffe0" stroke-width="0.9"/></svg>
<svg style="left:499px;top:73px;" width="18" height="17" viewBox="0 0 18 17"><path d="M11.5 13.2 L4 13.2 L4 11.2 L0.5 13.7 L4 16.2 L4 14.2 L11.5 14.2Z" fill="#f5c400" stroke="#8a7a50" stroke-width="0.4"/><path d="M13.25 10.5 L13.25 4 L11.45 4 L14.25 0.5 L17.05 4 L15.25 4 L15.25 10.5Z" fill="#74c24e" stroke="#6e7a62" stroke-width="0.5"/><rect x="11.5" y="10.5" width="5.5" height="5.5" fill="#f03c12" stroke="#7a5a2a" stroke-width="0.6"/><text x="1" y="8.3" font-family="Liberation Sans" font-size="7.2" fill="#777">+X</text></svg>
<svg style="left:526px;top:73px;" width="18" height="17" viewBox="0 0 18 17"><path d="M6 13.2 L13.5 13.2 L13.5 11.2 L17.5 13.7 L13.5 16.2 L13.5 14.2 L6 14.2Z" fill="#f5c400" stroke="#8a7a50" stroke-width="0.4"/><path d="M2.25 10.5 L2.25 4 L0.4500000000000002 4 L3.25 0.5 L6.05 4 L4.25 4 L4.25 10.5Z" fill="#74c24e" stroke="#6e7a62" stroke-width="0.5"/><rect x="0.5" y="10.5" width="5.5" height="5.5" fill="#f03c12" stroke="#7a5a2a" stroke-width="0.6"/><text x="7" y="8.3" font-family="Liberation Sans" font-size="7.2" fill="#777">-X</text></svg>
<svg style="left:552px;top:73px;" width="18" height="17" viewBox="0 0 18 17"><path d="M6 13.2 L13.5 13.2 L13.5 11.2 L17.5 13.7 L13.5 16.2 L13.5 14.2 L6 14.2Z" fill="#f03c12" stroke="#8a7a50" stroke-width="0.4"/><path d="M2.25 10.5 L2.25 4 L0.4500000000000002 4 L3.25 0.5 L6.05 4 L4.25 4 L4.25 10.5Z" fill="#74c24e" stroke="#6e7a62" stroke-width="0.5"/><rect x="0.5" y="10.5" width="5.5" height="5.5" fill="#f5c400" stroke="#7a5a2a" stroke-width="0.6"/><text x="7" y="8.3" font-family="Liberation Sans" font-size="7.2" fill="#777">+Y</text></svg>
<svg style="left:578px;top:73px;" width="18" height="17" viewBox="0 0 18 17"><path d="M11.5 13.2 L4 13.2 L4 11.2 L0.5 13.7 L4 16.2 L4 14.2 L11.5 14.2Z" fill="#f03c12" stroke="#8a7a50" stroke-width="0.4"/><path d="M13.25 10.5 L13.25 4 L11.45 4 L14.25 0.5 L17.05 4 L15.25 4 L15.25 10.5Z" fill="#74c24e" stroke="#6e7a62" stroke-width="0.5"/><rect x="11.5" y="10.5" width="5.5" height="5.5" fill="#f5c400" stroke="#7a5a2a" stroke-width="0.6"/><text x="1" y="8.3" font-family="Liberation Sans" font-size="7.2" fill="#777">-Y</text></svg>
<svg style="left:604px;top:73px;" width="18" height="17" viewBox="0 0 18 17"><path d="M11.5 13.2 L4 13.2 L4 11.2 L0.5 13.7 L4 16.2 L4 14.2 L11.5 14.2Z" fill="#f03c12" stroke="#8a7a50" stroke-width="0.4"/><path d="M13.25 10.5 L13.25 4 L11.45 4 L14.25 0.5 L17.05 4 L15.25 4 L15.25 10.5Z" fill="#f5c400" stroke="#6e7a62" stroke-width="0.5"/><rect x="11.5" y="10.5" width="5.5" height="5.5" fill="#74c24e" stroke="#7a5a2a" stroke-width="0.6"/><text x="1" y="8.3" font-family="Liberation Sans" font-size="7.2" fill="#777">+Z</text></svg>
<svg style="left:631px;top:73px;" width="18" height="17" viewBox="0 0 18 17"><path d="M6 13.2 L13.5 13.2 L13.5 11.2 L17.5 13.7 L13.5 16.2 L13.5 14.2 L6 14.2Z" fill="#f03c12" stroke="#8a7a50" stroke-width="0.4"/><path d="M2.25 10.5 L2.25 4 L0.4500000000000002 4 L3.25 0.5 L6.05 4 L4.25 4 L4.25 10.5Z" fill="#f5c400" stroke="#6e7a62" stroke-width="0.5"/><rect x="0.5" y="10.5" width="5.5" height="5.5" fill="#74c24e" stroke="#7a5a2a" stroke-width="0.6"/><text x="7" y="8.3" font-family="Liberation Sans" font-size="7.2" fill="#777">-Z</text></svg>
<div style="left:663px;top:69px;width:25px;height:25px;border:1px solid #8c8c8c;border-radius:3px;background:#d2d2d4"></div>
<div style="left:689px;top:69px;width:26px;height:25px;border:1px solid #8c8c8c;border-radius:3px;background:#d2d2d4"></div>
<svg style="left:667px;top:73px;" width="20" height="18" viewBox="0 0 20 18"><path d="M7 12 L7 4" stroke="#e8b820" stroke-width="1.6"/><path d="M5 5 L7 2 L9 5Z" fill="#e8b820"/><path d="M7 12 L14 12" stroke="#e05a30" stroke-width="1.6"/><path d="M13 10 L16 12 L13 14Z" fill="#e05a30"/><path d="M7 12 L3 16" stroke="#6cc04a" stroke-width="2"/><path d="M9.5 4.8 Q14 0.6 18.5 4.8 Q14 9 9.5 4.8Z" fill="#f4f4f4" stroke="#505050" stroke-width="0.8"/><circle cx="14" cy="4.8" r="2.1" fill="#2c4c90"/><circle cx="14" cy="4.6" r="0.8" fill="#000"/></svg>
<svg style="left:694px;top:73px;" width="18" height="18" viewBox="0 0 18 18"><path d="M13.2 4.6 A6.3 6.3 0 1 0 15 10" fill="none" stroke="#7a9468" stroke-width="3.4"/><path d="M13.2 4.6 A6.3 6.3 0 1 0 15 10" fill="none" stroke="#a2da86" stroke-width="2.2"/><path d="M10.5 3.3 L16 0.8 L15.8 6.8Z" fill="#a2da86" stroke="#7a9468" stroke-width="0.7"/><circle cx="8.5" cy="9" r="2" fill="#f0c000" stroke="#d09000" stroke-width="0.4"/></svg>
<svg style="left:719px;top:73px;" width="18" height="18" viewBox="0 0 18 18"><path d="M13.2 4.6 A6.3 6.3 0 1 0 15 10" fill="none" stroke="#7a9468" stroke-width="3.4"/><path d="M13.2 4.6 A6.3 6.3 0 1 0 15 10" fill="none" stroke="#a2da86" stroke-width="2.2"/><path d="M10.5 3.3 L16 0.8 L15.8 6.8Z" fill="#a2da86" stroke="#7a9468" stroke-width="0.7"/><path d="M8.5 4.5 L10 7.5 L13 9 L10 10.5 L8.5 13.5 L7 10.5 L4 9 L7 7.5Z" fill="#fafafa" stroke="#b0b0a8" stroke-width="0.5"/><circle cx="8.5" cy="9" r="1.8" fill="#f2c200" stroke="#c89000" stroke-width="0.3"/></svg>
<svg style="left:745px;top:73px;" width="18" height="18" viewBox="0 0 18 18"><path d="M13.2 4.6 A6.3 6.3 0 1 0 15 10" fill="none" stroke="#7a9468" stroke-width="3.4"/><path d="M13.2 4.6 A6.3 6.3 0 1 0 15 10" fill="none" stroke="#a2da86" stroke-width="2.2"/><path d="M10.5 3.3 L16 0.8 L15.8 6.8Z" fill="#a2da86" stroke="#7a9468" stroke-width="0.7"/></svg>
<svg style="left:381px;top:84px;" width="10" height="14" viewBox="0 0 10 14"><path d="M0.5 0.5 L0.5 10 L3 7.8 L5 12 L6.5 11.3 L4.6 7.2 L8 7.2Z" fill="#111" stroke="#eee" stroke-width="0.6"/></svg>
<svg style="left:755.5px;top:81.5px;" width="10" height="14" viewBox="0 0 10 14"><path d="M0.5 0.5 L0.5 10 L3 7.8 L5 12 L6.5 11.3 L4.6 7.2 L8 7.2Z" fill="#111" stroke="#eee" stroke-width="0.6"/></svg>
<div style="left:5px;top:121px;width:57px;height:4px;background-image:radial-gradient(circle at 1px 1px,#c4c4c4 0.7px,transparent 1.1px),radial-gradient(circle at 3.3px 3px,#c4c4c4 0.7px,transparent 1.1px);background-size:4.6px 4px"></div>
<div style="left:143px;top:121px;width:57px;height:4px;background-image:radial-gradient(circle at 1px 1px,#c4c4c4 0.7px,transparent 1.1px),radial-gradient(circle at 3.3px 3px,#c4c4c4 0.7px,transparent 1.1px);background-size:4.6px 4px"></div>
<div class="t" style="left:-97px;width:400px;text-align:center;top:120.17px;font-size:8.9px;line-height:8.9px;color:#1e1e1e;">Pipeline Browser</div>
<div style="left:202px;top:118.5px;width:10px;height:10px;border:1px solid #aaaaaa;border-radius:2px;background:linear-gradient(#fdfdfd,#e8e8e8)"></div>
<svg style="left:202px;top:118.5px;" width="10" height="10" viewBox="0 0 10 10"><rect x="4" y="2" width="4" height="4" fill="none" stroke="#666" stroke-width="0.9"/><rect x="2.3" y="4" width="4.4" height="4.2" fill="#fff" stroke="#111" stroke-width="1.2"/><rect x="3.7" y="1.8" width="4.6" height="1" fill="#111"/></svg>
<div style="left:214px;top:118.5px;width:10px;height:10px;border:1px solid #aaaaaa;border-radius:2px;background:linear-gradient(#fdfdfd,#e8e8e8)"></div>
<svg style="left:214px;top:118.5px;" width="10" height="10" viewBox="0 0 10 10"><path d="M2.3 2.3 L7.7 7.7 M7.7 2.3 L2.3 7.7" stroke="#111" stroke-width="1.3"/></svg>
<div style="left:3px;top:132px;width:222px;height:209px;border:1px solid #8e8e8e;border-radius:2px;background:#fff"></div>
<div style="left:30px;top:133px;width:1px;height:5px;background:#9a9a9a"></div>
<div style="left:30px;top:149px;width:1px;height:5px;background:#9a9a9a"></div>
<svg style="left:26px;top:137px;" width="7" height="12" viewBox="0 0 7 12"><defs><linearGradient id="gsrv" x1="0" y1="0" x2="0" y2="1"><stop offset="0" stop-color="#eee"/><stop offset="1" stop-color="#888"/></linearGradient></defs><rect x="0.6" y="0.6" width="5.8" height="10.8" fill="url(#gsrv)" stroke="#222" stroke-width="1.1"/><rect x="2" y="2" width="3" height="1.4" fill="#111"/></svg>
<div class="t" style="left:38.5px;top:139.23px;font-size:10px;line-height:10px;color:#1e1e1e;">builtin:</div>
<div style="left:23px;top:154px;width:69px;height:13px;background:#6993c3;border:1px dotted #c8a070"></div>
<svg style="left:24px;top:154px;" width="13" height="12" viewBox="0 0 13 12"><path d="M0.5 2.5 L5 0.5 L12.5 1.5 L12.5 10 L7.5 11.5 L0.5 10Z" fill="#2f7f24" stroke="#3c4c30" stroke-width="0.7"/><path d="M1 2.6 L5 0.9 L12 1.8 L7.5 3.4Z" fill="#58b040"/><path d="M7.5 3.5 L12.2 1.9 L12.2 9.8 L7.5 11.2Z" fill="#6ccc50"/><path d="M0.5 2.5 L7.5 3.5 L12.5 1.5 M7.5 3.5 L7.5 11.5" stroke="#3c5a30" stroke-width="0.6" fill="none"/></svg>
<div class="t" style="left:38.5px;top:156.73px;font-size:10px;line-height:10px;color:#ffffff;">sg6043.dat</div>
<svg style="left:8px;top:157px;" width="11" height="8" viewBox="0 0 11 8"><path d="M0.5 4 Q5.5 -1.5 10.5 4 Q5.5 9.5 0.5 4Z" fill="#fff" stroke="#333" stroke-width="1"/><circle cx="5.5" cy="4" r="2.3" fill="#1f4590"/><circle cx="5.2" cy="3.6" r="0.8" fill="#000"/></svg>
<div style="left:77px;top:341px;width:70px;height:4px;background-image:radial-gradient(circle at 1px 1px,#c4c4c4 0.7px,transparent 1.1px),radial-gradient(circle at 3.3px 3px,#c4c4c4 0.7px,transparent 1.1px);background-size:4.6px 4px"></div>
<div style="left:5px;top:350px;width:70px;height:4px;background-image:radial-gradient(circle at 1px 1px,#c4c4c4 0.7px,transparent 1.1px),radial-gradient(circle at 3.3px 3px,#c4c4c4 0.7px,transparent 1.1px);background-size:4.6px 4px"></div>
<div style="left:130px;top:350px;width:70px;height:4px;background-image:radial-gradient(circle at 1px 1px,#c4c4c4 0.7px,transparent 1.1px),radial-gradient(circle at 3.3px 3px,#c4c4c4 0.7px,transparent 1.1px);background-size:4.6px 4px"></div>
<div class="t" style="left:-97px;width:400px;text-align:center;top:348.17px;font-size:8.9px;line-height:8.9px;color:#1e1e1e;">Properties</div>
<div style="left:202px;top:346.5px;width:10px;height:10px;border:1px solid #aaaaaa;border-radius:2px;background:linear-gradient(#fdfdfd,#e8e8e8)"></div>
<svg style="left:202px;top:346.5px;" width="10" height="10" viewBox="0 0 10 10"><rect x="4" y="2" width="4" height="4" fill="none" stroke="#666" stroke-width="0.9"/><rect x="2.3" y="4" width="4.4" height="4.2" fill="#fff" stroke="#111" stroke-width="1.2"/><rect x="3.7" y="1.8" width="4.6" height="1" fill="#111"/></svg>
<div style="left:214px;top:346.5px;width:10px;height:10px;border:1px solid #aaaaaa;border-radius:2px;background:linear-gradient(#fdfdfd,#e8e8e8)"></div>
<svg style="left:214px;top:346.5px;" width="10" height="10" viewBox="0 0 10 10"><path d="M2.3 2.3 L7.7 7.7 M7.7 2.3 L2.3 7.7" stroke="#111" stroke-width="1.3"/></svg>
<div style="left:5px;top:360px;width:57px;height:20px;border:1px solid #bdbdbd;border-radius:2px;background:linear-gradient(#f0f0f0,#dcdcdc)"></div>
<svg style="left:12px;top:364px;" width="13" height="13" viewBox="0 0 13 13"><path d="M1 4 L6 2 L11 4 L11 10 L6 12 L1 10Z" fill="#e6e6e6" stroke="#bbb" stroke-width="0.8"/><rect x="6.5" y="1" width="5" height="4" fill="#ddd" stroke="#bbb" stroke-width="0.7"/></svg>
<div class="t" style="left:28px;top:366.24px;font-size:10px;line-height:10px;color:#a6a6a6;">Apply</div>
<div style="left:28px;top:376px;width:7px;height:1px;background:#b0b0b0"></div>
<div style="left:70px;top:360px;width:57px;height:20px;border:1px solid #bdbdbd;border-radius:2px;background:linear-gradient(#f0f0f0,#dcdcdc)"></div>
<svg style="left:79px;top:364px;" width="12" height="12" viewBox="0 0 12 12"><circle cx="6" cy="6" r="5.5" fill="#cfcfcf" stroke="#bdbdbd"/><path d="M3 9 L9 3" stroke="#e8e8e8" stroke-width="1.5"/></svg>
<div class="t" style="left:94px;top:366.24px;font-size:10px;line-height:10px;color:#a6a6a6;">Reset</div>
<div style="left:94px;top:376px;width:6px;height:1px;background:#b0b0b0"></div>
<div style="left:135px;top:360px;width:58px;height:20px;border:1px solid #a3a3a3;border-radius:2px;background:linear-gradient(#fbfbfb,#dedede)"></div>
<svg style="left:141px;top:364px;" width="12" height="12" viewBox="0 0 12 12"><path d="M2 2 L10 10 M10 2 L2 10" stroke="#f05a28" stroke-width="3"/><path d="M2 2 L10 10 M10 2 L2 10" stroke="#ff9a70" stroke-width="0.8"/></svg>
<div class="t" style="left:157px;top:366.24px;font-size:10px;line-height:10px;color:#1e1e1e;">Delete</div>
<div style="left:200px;top:360px;width:23px;height:20px;border:1px solid #a3a3a3;border-radius:2px;background:linear-gradient(#fbfbfb,#dedede)"></div>
<div class="t" style="left:207px;top:363.66px;font-size:16px;line-height:16px;color:#2f86de;font-weight:bold;text-shadow:0.5px 0.5px 0 #1a5aa0">?</div>
<div style="left:10px;top:396px;width:10px;height:10px;border:1px solid #9c9c9c;border-radius:1px;background:linear-gradient(#fff,#ececec)"></div>
<svg style="left:10px;top:396px;" width="10" height="10" viewBox="0 0 10 10"><path d="M2.5 2.5 L7.5 7.5 M7.5 2.5 L2.5 7.5" stroke="#000" stroke-width="2"/></svg>
<div class="t" style="left:24px;top:396.74px;font-size:10px;line-height:10px;color:#1e1e1e;">Check geometry</div>
<div style="left:10px;top:412px;width:10px;height:10px;border:1px solid #9c9c9c;border-radius:1px;background:linear-gradient(#fff,#ececec)"></div>
<div class="t" style="left:24px;top:412.74px;font-size:10px;line-height:10px;color:#1e1e1e;">Flip normal</div>
<div class="t" style="left:10.5px;top:433.24px;font-size:10px;line-height:10px;color:#1e1e1e;">Translate</div>
<div class="t" style="left:10px;top:452.24px;font-size:10px;line-height:10px;color:#1e1e1e;">Orientation</div>
<div class="t" style="left:10px;top:463.24px;font-size:10px;line-height:10px;color:#1e1e1e;">(degrees)</div>
<div class="t" style="left:10px;top:481.74px;font-size:10px;line-height:10px;color:#1e1e1e;">Scale</div>
<div class="t" style="left:10px;top:502.24px;font-size:10px;line-height:10px;color:#1e1e1e;">Origin</div>
<div class="t" style="left:10px;top:522.74px;font-size:10px;line-height:10px;color:#1e1e1e;">Deflection</div>
<div class="inp" style="left:66px;top:430px;width:51px;height:15px;"></div>
<div class="t" style="left:70px;top:433.24px;font-size:10px;line-height:10px;color:#1e1e1e;">0</div>
<div class="inp" style="left:117px;top:430px;width:51px;height:15px;"></div>
<div class="t" style="left:121px;top:433.24px;font-size:10px;line-height:10px;color:#1e1e1e;">0</div>
<div class="inp" style="left:168px;top:430px;width:50px;height:15px;"></div>
<div class="t" style="left:172px;top:433.24px;font-size:10px;line-height:10px;color:#1e1e1e;">0</div>
<div class="inp" style="left:66px;top:454px;width:51px;height:15px;"></div>
<div class="t" style="left:70px;top:457.24px;font-size:10px;line-height:10px;color:#1e1e1e;">0</div>
<div class="inp" style="left:117px;top:454px;width:51px;height:15px;"></div>
<div class="t" style="left:121px;top:457.24px;font-size:10px;line-height:10px;color:#1e1e1e;">0</div>
<div class="inp" style="left:168px;top:454px;width:50px;height:15px;"></div>
<div class="t" style="left:172px;top:457.24px;font-size:10px;line-height:10px;color:#1e1e1e;">0</div>
<div class="inp" style="left:66px;top:478px;width:51px;height:15px;"></div>
<div class="t" style="left:70px;top:481.24px;font-size:10px;line-height:10px;color:#1e1e1e;">1</div>
<div class="inp" style="left:117px;top:478px;width:51px;height:15px;"></div>
<div class="t" style="left:121px;top:481.24px;font-size:10px;line-height:10px;color:#1e1e1e;">1</div>
<div class="inp" style="left:168px;top:478px;width:50px;height:15px;"></div>
<div class="t" style="left:172px;top:481.24px;font-size:10px;line-height:10px;color:#1e1e1e;">1</div>
<div class="inp" style="left:66px;top:499px;width:51px;height:15px;"></div>
<div class="t" style="left:70px;top:502.24px;font-size:10px;line-height:10px;color:#1e1e1e;">0</div>
<div class="inp" style="left:117px;top:499px;width:51px;height:15px;"></div>
<div class="t" style="left:121px;top:502.24px;font-size:10px;line-height:10px;color:#1e1e1e;">0</div>
<div class="inp" style="left:168px;top:499px;width:50px;height:15px;"></div>
<div class="t" style="left:172px;top:502.24px;font-size:10px;line-height:10px;color:#1e1e1e;">0</div>
<div style="left:66px;top:525px;width:56px;height:3px;border:1px solid #a8a8a8;border-radius:2px;background:#e6e6e6"></div>
<svg style="left:74px;top:520px;" width="11" height="13" viewBox="0 0 11 13"><path d="M1 1.5 Q1 0.5 2 0.5 L9 0.5 Q10 0.5 10 1.5 L10 8 L5.5 12 L1 8Z" fill="url(#gbtn)" stroke="#8e8e8e" stroke-width="0.9"/></svg>
<div class="inp" style="left:128px;top:520px;width:90px;height:15px;"></div>
<div class="t" style="left:132px;top:523.24px;font-size:10px;line-height:10px;color:#1e1e1e;">0.2</div>
<div style="left:4px;top:640px;width:221px;height:1px;background:#a8a8a8"></div>
<div style="left:4px;top:640px;width:70px;height:14px;border:1px solid #a8a8a8;border-radius:2px 2px 0 0;background:linear-gradient(#f6f6f6,#dcdcdc)"></div>
<div style="left:74px;top:640px;width:53px;height:14px;border:1px solid #a8a8a8;border-radius:2px 2px 0 0;background:linear-gradient(#f6f6f6,#dcdcdc)"></div>
<div style="left:127px;top:640px;width:64px;height:16px;border:1px solid #a8a8a8;border-top:none;border-radius:0 0 2px 2px;background:#eeeeee"></div>
<div style="left:189.5px;top:640px;width:3px;height:2px;background:#eeeeee;border-top:1px solid #a8a8a8;border-left:1px solid #a8a8a8;border-radius:2px 0 0 0"></div>
<div class="t" style="left:12.5px;top:642.74px;font-size:10px;line-height:10px;color:#1e1e1e;">Information</div>
<div class="t" style="left:84px;top:642.74px;font-size:10px;line-height:10px;color:#1e1e1e;">Display</div>
<div class="t" style="left:136px;top:643.74px;font-size:10px;line-height:10px;color:#1e1e1e;">Properties</div>
<div style="left:230px;top:132px;width:518px;height:1px;background:#a8a8a8"></div>
<div style="left:230px;top:132px;width:1px;height:524px;background:#a8a8a8"></div>
<div style="left:747px;top:132px;width:1px;height:524px;background:#a8a8a8"></div>
<div style="left:230px;top:117px;width:76px;height:17px;border:1px solid #a8a8a8;border-bottom:none;border-radius:3px 3px 0 0;background:#efefef"></div>
<div class="t" style="left:239.5px;top:121.23px;font-size:10px;line-height:10px;color:#1e1e1e;">Layout #1</div>
<svg style="left:288px;top:121px;" width="8" height="8" viewBox="0 0 8 8"><path d="M1 1 L7.5 7.5 M7.5 1 L1 7.5" stroke="#111" stroke-width="1.2"/></svg>
<div style="left:306px;top:119px;width:25px;height:14px;border:1px solid #a8a8a8;border-bottom:none;border-radius:3px 3px 0 0;background:linear-gradient(#f2f2f2,#dadada)"></div>
<svg style="left:314px;top:121px;" width="9" height="9" viewBox="0 0 9 9"><path d="M4.5 1.5 L4.5 8.5 M1 5 L8 5" stroke="#222" stroke-width="1"/></svg>
<div style="left:233px;top:135.5px;width:19px;height:13px;border:1px solid #a6a6a6;border-radius:2px;background:linear-gradient(#fafafa,#e4e4e4)"></div>
<div style="left:253px;top:135.5px;width:19px;height:13px;border:1px solid #a6a6a6;border-radius:2px;background:linear-gradient(#fafafa,#e4e4e4)"></div>
<div style="left:273px;top:135.5px;width:26px;height:13px;border:1px solid #a6a6a6;border-radius:2px;background:linear-gradient(#fafafa,#e4e4e4)"></div>
<div style="left:300px;top:135.5px;width:19px;height:13px;border:1px solid #a6a6a6;border-radius:2px;background:linear-gradient(#fafafa,#e4e4e4)"></div>
<div style="left:320px;top:135.5px;width:19px;height:13px;border:1px solid #a6a6a6;border-radius:2px;background:linear-gradient(#fafafa,#e4e4e4)"></div>
<div style="left:340px;top:135.5px;width:19px;height:13px;border:1px solid #a6a6a6;border-radius:2px;background:linear-gradient(#fafafa,#e4e4e4)"></div>
<div style="left:360px;top:135.5px;width:19px;height:13px;border:1px solid #a6a6a6;border-radius:2px;background:linear-gradient(#fafafa,#e4e4e4)"></div>
<div style="left:380px;top:135.5px;width:19px;height:13px;border:1px solid #a6a6a6;border-radius:2px;background:linear-gradient(#fafafa,#e4e4e4)"></div>
<div style="left:400px;top:135.5px;width:20px;height:13px;border:1px solid #a6a6a6;border-radius:2px;background:linear-gradient(#fafafa,#e4e4e4)"></div>
<div style="left:420px;top:135.5px;width:20px;height:13px;border:1px solid #a6a6a6;border-radius:2px;background:linear-gradient(#fafafa,#e4e4e4)"></div>
<div style="left:440px;top:135.5px;width:19px;height:13px;border:1px solid #a6a6a6;border-radius:2px;background:linear-gradient(#fafafa,#e4e4e4)"></div>
<div style="left:460px;top:135.5px;width:19px;height:13px;border:1px solid #a6a6a6;border-radius:2px;background:linear-gradient(#fafafa,#e4e4e4)"></div>
<div class="t" style="left:278.5px;top:136.61px;font-size:10.5px;line-height:10.5px;color:#1e1e1e;">3D</div>
<svg style="left:236px;top:136px;" width="14" height="12" viewBox="0 0 14 12"><rect x="5" y="1" width="7" height="7" fill="#c8c8b8" stroke="#8a8a7a" stroke-width="0.8"/><path d="M2 10 Q3 5 8 6" fill="none" stroke="#e04a20" stroke-width="2"/><path d="M1 7 L3 11 L5 8Z" fill="#e04a20"/></svg>
<svg style="left:256px;top:136px;" width="14" height="12" viewBox="0 0 14 12"><rect x="2" y="1" width="6" height="6" fill="#e0e0e0" stroke="#bbb" stroke-width="0.8"/><rect x="6" y="5" width="6" height="6" fill="#e0e0e0" stroke="#bbb" stroke-width="0.8"/></svg>
<svg style="left:303px;top:136px;" width="14" height="12" viewBox="0 0 14 12"><rect x="1" y="1" width="9" height="9" fill="#c8c8b8" stroke="#7a7a6a" stroke-width="0.8"/><circle cx="10" cy="9" r="3" fill="#50c040"/></svg>
<svg style="left:323px;top:136px;" width="14" height="12" viewBox="0 0 14 12"><rect x="1" y="1" width="11" height="10" fill="none" stroke="#999" stroke-width="0.7" stroke-dasharray="1.5 1.5"/><path d="M6 2 L10 8 L2 8Z" fill="#6cc04a"/><path d="M8 6 L12 11" stroke="#555" stroke-width="1"/></svg>
<svg style="left:343px;top:136px;" width="14" height="12" viewBox="0 0 14 12"><rect x="1" y="1" width="11" height="10" fill="none" stroke="#999" stroke-width="0.7" stroke-dasharray="1.5 1.5"/><circle cx="6" cy="2" r="1" fill="#f05030"/><circle cx="2" cy="9" r="1" fill="#f05030"/><path d="M8 6 L12 11" stroke="#555" stroke-width="1"/></svg>
<svg style="left:363px;top:136px;" width="14" height="12" viewBox="0 0 14 12"><path d="M1 4 L8 1 L13 4 L13 9 L6 11 L1 8Z" fill="#6cc04a" stroke="#5a8a4a" stroke-width="0.6"/><path d="M6 6 L9 11" stroke="#555" stroke-width="1"/></svg>
<svg style="left:383px;top:136px;" width="14" height="12" viewBox="0 0 14 12"><rect x="2" y="2" width="8" height="8" fill="#f8c0b0" stroke="#999" stroke-width="0.6"/><circle cx="12" cy="3" r="1" fill="#f05030"/><circle cx="12" cy="8" r="1" fill="#f05030"/><path d="M6 6 L9 11" stroke="#555" stroke-width="1"/></svg>
<svg style="left:403px;top:136px;" width="14" height="12" viewBox="0 0 14 12"><path d="M1 2 L7 4 L13 1 L10 6 L13 11 L7 9 L1 11Z" fill="#d8f0c8" stroke="#5a8a4a" stroke-width="0.8"/></svg>
<svg style="left:423px;top:136px;" width="14" height="12" viewBox="0 0 14 12"><path d="M1 2 L7 4 L13 1 L10 6 L13 11 L7 9 L1 11Z" fill="#f8d0c0" stroke="#5a8a4a" stroke-width="0.8"/><circle cx="6" cy="6" r="1.2" fill="#f05030"/></svg>
<svg style="left:443px;top:136px;" width="14" height="12" viewBox="0 0 14 12"><circle cx="6" cy="5" r="3" fill="#e8f0f0" stroke="#9aa" stroke-width="0.8"/><path d="M8 7 L11 10" stroke="#6cc04a" stroke-width="1.5"/></svg>
<svg style="left:463px;top:136px;" width="14" height="12" viewBox="0 0 14 12"><rect x="2" y="1" width="11" height="10" fill="#e8f4e0" stroke="#8a9a8a" stroke-width="0.8"/><rect x="2" y="1" width="11" height="3" fill="#8ab4d8"/><path d="M2 7 L13 7" stroke="#8a9a8a" stroke-width="0.6"/></svg>
<div style="left:666px;top:135.5px;width:18px;height:13px;border:1px solid #a6a6a6;border-radius:2px;background:linear-gradient(#fafafa,#e4e4e4)"></div>
<svg style="left:666px;top:136px;" width="19" height="13" viewBox="0 0 19 13"><rect x="5" y="3" width="8" height="7" fill="none" stroke="#111" stroke-width="1"/><path d="M9 3 L9 10" stroke="#111" stroke-width="1"/></svg>
<div style="left:686px;top:135.5px;width:19px;height:13px;border:1px solid #a6a6a6;border-radius:2px;background:linear-gradient(#fafafa,#e4e4e4)"></div>
<svg style="left:686px;top:136px;" width="19" height="13" viewBox="0 0 19 13"><rect x="5.5" y="3" width="8" height="7" fill="#dde" stroke="#111" stroke-width="1"/><path d="M5.5 6.5 L13.5 6.5" stroke="#111" stroke-width="1"/></svg>
<div style="left:706px;top:135.5px;width:19px;height:13px;border:1px solid #a6a6a6;border-radius:2px;background:linear-gradient(#fafafa,#e4e4e4)"></div>
<svg style="left:706px;top:136px;" width="19" height="13" viewBox="0 0 19 13"><rect x="5.5" y="3" width="8" height="7" fill="none" stroke="#111" stroke-width="1"/><rect x="5.5" y="3" width="8" height="1.5" fill="#111"/></svg>
<div style="left:726px;top:135.5px;width:19px;height:13px;border:1px solid #a6a6a6;border-radius:2px;background:linear-gradient(#fafafa,#e4e4e4)"></div>
<svg style="left:726px;top:136px;" width="19" height="13" viewBox="0 0 19 13"><path d="M6 3 L13 10 M13 3 L6 10" stroke="#111" stroke-width="1.3"/></svg>
<div style="left:231px;top:149px;width:516px;height:506px;border:2px solid #0000ff;background:linear-gradient(#619e9c,#455038)"></div>
<svg style="left:0;top:0" width="1000" height="680" viewBox="0 0 1000 680"><defs><clipPath id="vpclip"><rect x="233" y="151" width="512" height="502"/></clipPath></defs><g clip-path="url(#vpclip)"><polygon points="270.0,388.0 270.5,385.0 273.0,381.0 278.2,377.3 287.0,371.8 309.0,361.9 331.0,354.2 353.0,348.7 375.0,345.0 397.0,342.1 419.0,340.3 441.0,339.5 463.0,339.2 485.0,340.6 496.0,342.0 512.0,344.6 528.0,347.8 540.0,352.3 735.0,445.0 735.0,445.0 713.0,439.8 686.0,437.1 659.0,436.6 632.0,437.1 605.0,438.9 578.0,441.5 560.0,445.0 542.0,449.5 524.0,454.6 506.0,460.6 488.0,466.6 470.0,472.6 452.0,480.5 442.0,485.0 432.0,491.0 423.0,497.0 415.0,504.0 409.0,512.0 405.6,519.4 268.5,391.0" fill="#d1cdc2"/><polygon points="270.0,388.0 405.6,519.4 406.8,523.0 330.0,452.0 268.5,391.0" fill="#c4c0b6"/><polygon points="405.6,519.4 409.0,512.0 415.0,504.0 423.0,497.0 432.0,491.0 442.0,485.0 452.0,480.5 470.0,472.6 488.0,466.6 506.0,460.6 524.0,454.6 542.0,449.5 560.0,445.0 578.0,441.5 605.0,438.9 632.0,437.1 659.0,436.6 686.0,437.1 713.0,439.8 735.0,445.0 735.0,445.0 704.0,448.8 668.0,454.2 632.0,460.5 596.0,468.6 560.0,479.0 530.0,488.8 500.0,497.2 470.0,506.8 459.7,510.0 442.0,515.9 424.4,520.6 406.8,523.0 405.6,521.5" fill="#aaa8a2"/><clipPath id="topclip"><polygon points="270.0,388.0 270.5,385.0 273.0,381.0 278.2,377.3 287.0,371.8 309.0,361.9 331.0,354.2 353.0,348.7 375.0,345.0 397.0,342.1 419.0,340.3 441.0,339.5 463.0,339.2 485.0,340.6 496.0,342.0 512.0,344.6 528.0,347.8 540.0,352.3 735.0,445.0 735.0,445.0 713.0,439.8 686.0,437.1 659.0,436.6 632.0,437.1 605.0,438.9 578.0,441.5 560.0,445.0 542.0,449.5 524.0,454.6 506.0,460.6 488.0,466.6 470.0,472.6 452.0,480.5 442.0,485.0 432.0,491.0 423.0,497.0 415.0,504.0 409.0,512.0 405.6,519.4 268.5,391.0"/></clipPath><path clip-path="url(#topclip)" d="M211.0 330L413.2 530M212.2 330L414.6 530M213.7 330L416.3 530M216.6 330L419.8 530M221.8 330L426.1 530M227.0 330L432.4 530M233.5 330L440.3 530M240.7 330L449.0 530M248.5 330L458.5 530M257.0 330L468.7 530M265.4 330L479.1 530M275.2 330L491.0 530M284.9 330L503.0 530M295.2 330L515.7 530M306.2 330L529.4 530M317.1 330L543.0 530M328.7 330L557.6 530M337.6 330L568.8 530M346.6 330L580.3 530M359.4 330L596.6 530M372.8 330L613.7 530M384.8 330L629.4 530M396.2 330L644.2 530M407.5 330L661.2 530M418.0 330L679.7 530M427.8 330L697.5 530M437.4 330L715.7 530M445.7 330L732.2 530M453.4 330L747.9 530M458.1 330L757.8 530M464.4 330L771.6 530M470.7 330L785.9 530M476.4 330L799.3 530M481.4 330L811.9 530M485.6 330L826.1 530M488.4 330L838.9 530M491.1 330L852.0 530M493.2 330L864.0 530M495.2 330L876.4 530M496.5 330L886.0 530M497.7 330L895.8 530M498.7 330L905.8 530M499.3 330L912.6 530M499.7 330L916.6 530" stroke="#2626a0" stroke-width="0.85" fill="none"/><path d="M405.6 519.4L405.6 521.5M414.8 504.3L414.8 521.9M424.0 496.3L424.0 520.7M433.2 490.3L433.2 518.2M442.4 484.8L442.4 515.8M451.6 480.7L451.6 512.7M460.8 476.6L460.8 509.7M470.0 472.6L470.0 506.8M479.2 469.5L479.2 503.9M488.4 466.5L488.4 500.9M497.6 463.4L497.6 498.0M506.8 460.3L506.8 495.3M516.0 457.3L516.0 492.7M525.2 454.3L525.2 490.1M534.4 451.7L534.4 487.4M543.6 449.1L543.6 484.4M552.8 446.8L552.8 481.4M562.0 444.6L562.0 478.4M571.2 442.8L571.2 475.8M580.4 441.3L580.4 473.1M589.6 440.4L589.6 470.4M598.8 439.5L598.8 468.0M608.0 438.7L608.0 465.9M617.2 438.1L617.2 463.8M626.4 437.5L626.4 461.8M635.6 437.0L635.6 459.9M644.8 436.9L644.8 458.3M654.0 436.7L654.0 456.6M663.2 436.7L663.2 455.0M672.4 436.8L672.4 453.5M681.6 437.0L681.6 452.2M690.8 437.6L690.8 450.8M700.0 438.5L700.0 449.4M709.2 439.4L709.2 448.2M718.4 441.1L718.4 447.0M727.6 443.3L727.6 445.9M405.6 519.4L414.8 521.9M414.8 510.1L424.0 504.4M414.8 516.0L424.0 512.5M414.8 504.3L424.0 504.4M414.8 510.1L424.0 512.5M414.8 516.0L424.0 520.7M424.0 504.4L433.2 499.6M424.0 512.5L433.2 508.9M424.0 504.4L433.2 490.3M424.0 504.4L433.2 508.9M424.0 512.5L433.2 518.2M433.2 497.3L442.4 492.6M433.2 504.3L442.4 500.3M433.2 511.3L442.4 508.0M433.2 490.3L442.4 492.6M433.2 497.3L442.4 500.3M433.2 504.3L442.4 508.0M433.2 511.3L442.4 515.8M442.4 492.6L451.6 488.7M442.4 500.3L451.6 496.7M442.4 508.0L451.6 504.7M442.4 484.8L451.6 488.7M442.4 492.6L451.6 496.7M442.4 500.3L451.6 504.7M442.4 508.0L451.6 512.7M451.6 488.7L460.8 484.9M451.6 496.7L460.8 493.1M451.6 504.7L460.8 501.4M451.6 488.7L460.8 476.6M451.6 488.7L460.8 493.1M451.6 496.7L460.8 501.4M451.6 504.7L460.8 509.7M460.8 484.9L470.0 481.2M460.8 493.1L470.0 489.7M460.8 501.4L470.0 498.2M460.8 476.6L470.0 481.2M460.8 484.9L470.0 489.7M460.8 493.1L470.0 498.2M460.8 501.4L470.0 506.8M470.0 479.4L479.2 476.4M470.0 486.3L479.2 483.3M470.0 493.1L479.2 490.1M470.0 500.0L479.2 497.0M470.0 472.6L479.2 476.4M470.0 479.4L479.2 483.3M470.0 486.3L479.2 490.1M470.0 493.1L479.2 497.0M470.0 500.0L479.2 503.9M479.2 476.4L488.4 473.4M479.2 483.3L488.4 480.2M479.2 490.1L488.4 487.1M479.2 497.0L488.4 494.0M479.2 476.4L488.4 466.5M479.2 476.4L488.4 480.2M479.2 483.3L488.4 487.1M479.2 490.1L488.4 494.0M479.2 497.0L488.4 500.9M488.4 473.4L497.6 470.3M488.4 480.2L497.6 477.2M488.4 487.1L497.6 484.1M488.4 494.0L497.6 491.1M488.4 466.5L497.6 470.3M488.4 473.4L497.6 477.2M488.4 480.2L497.6 484.1M488.4 487.1L497.6 491.1M488.4 494.0L497.6 498.0M497.6 470.3L506.8 467.3M497.6 477.2L506.8 474.3M497.6 484.1L506.8 481.3M497.6 491.1L506.8 488.3M497.6 463.4L506.8 467.3M497.6 470.3L506.8 474.3M497.6 477.2L506.8 481.3M497.6 484.1L506.8 488.3M497.6 491.1L506.8 495.3M506.8 467.3L516.0 464.4M506.8 474.3L516.0 471.4M506.8 481.3L516.0 478.5M506.8 488.3L516.0 485.6M506.8 467.3L516.0 457.3M506.8 467.3L516.0 471.4M506.8 474.3L516.0 478.5M506.8 481.3L516.0 485.6M506.8 488.3L516.0 492.7M516.0 464.4L525.2 461.4M516.0 471.4L525.2 468.6M516.0 478.5L525.2 475.8M516.0 485.6L525.2 483.0M516.0 457.3L525.2 461.4M516.0 464.4L525.2 468.6M516.0 471.4L525.2 475.8M516.0 478.5L525.2 483.0M516.0 485.6L525.2 490.1M525.2 461.4L534.4 458.8M525.2 468.6L534.4 465.9M525.2 475.8L534.4 473.1M525.2 483.0L534.4 480.2M525.2 454.3L534.4 458.8M525.2 461.4L534.4 465.9M525.2 468.6L534.4 473.1M525.2 475.8L534.4 480.2M525.2 483.0L534.4 487.4M534.4 458.8L543.6 456.2M534.4 465.9L543.6 463.2M534.4 473.1L543.6 470.3M534.4 480.2L543.6 477.3M534.4 458.8L543.6 449.1M534.4 458.8L543.6 463.2M534.4 465.9L543.6 470.3M534.4 473.1L543.6 477.3M534.4 480.2L543.6 484.4M543.6 456.2L552.8 453.7M543.6 463.2L552.8 460.6M543.6 470.3L552.8 467.5M543.6 477.3L552.8 474.4M543.6 449.1L552.8 453.7M543.6 456.2L552.8 460.6M543.6 463.2L552.8 467.5M543.6 470.3L552.8 474.4M543.6 477.3L552.8 481.4M552.8 453.7L562.0 451.4M552.8 460.6L562.0 458.1M552.8 467.5L562.0 464.9M552.8 474.4L562.0 471.7M552.8 446.8L562.0 451.4M552.8 453.7L562.0 458.1M552.8 460.6L562.0 464.9M552.8 467.5L562.0 471.7M552.8 474.4L562.0 478.4M562.0 453.1L571.2 451.1M562.0 461.5L571.2 459.3M562.0 470.0L571.2 467.5M562.0 453.1L571.2 442.8M562.0 453.1L571.2 459.3M562.0 461.5L571.2 467.5M562.0 470.0L571.2 475.8M571.2 451.1L580.4 449.2M571.2 459.3L580.4 457.2M571.2 467.5L580.4 465.1M571.2 442.8L580.4 449.2M571.2 451.1L580.4 457.2M571.2 459.3L580.4 465.1M571.2 467.5L580.4 473.1M580.4 449.2L589.6 447.9M580.4 457.2L589.6 455.4M580.4 465.1L589.6 462.9M580.4 441.3L589.6 447.9M580.4 449.2L589.6 455.4M580.4 457.2L589.6 462.9M580.4 465.1L589.6 470.4M589.6 447.9L598.8 446.6M589.6 455.4L598.8 453.7M589.6 462.9L598.8 460.9M589.6 447.9L598.8 439.5M589.6 447.9L598.8 453.7M589.6 455.4L598.8 460.9M589.6 462.9L598.8 468.0M598.8 446.6L608.0 445.5M598.8 453.7L608.0 452.3M598.8 460.9L608.0 459.1M598.8 439.5L608.0 445.5M598.8 446.6L608.0 452.3M598.8 453.7L608.0 459.1M598.8 460.9L608.0 465.9M608.0 445.5L617.2 444.5M608.0 452.3L617.2 451.0M608.0 459.1L617.2 457.4M608.0 438.7L617.2 444.5M608.0 445.5L617.2 451.0M608.0 452.3L617.2 457.4M608.0 459.1L617.2 463.8M617.2 446.7L626.4 445.6M617.2 455.2L626.4 453.7M617.2 446.7L626.4 437.5M617.2 446.7L626.4 453.7M617.2 455.2L626.4 461.8M626.4 445.6L635.6 444.6M626.4 453.7L635.6 452.3M626.4 437.5L635.6 444.6M626.4 445.6L635.6 452.3M626.4 453.7L635.6 459.9M635.6 444.6L644.8 444.0M635.6 452.3L644.8 451.1M635.6 437.0L644.8 444.0M635.6 444.6L644.8 451.1M635.6 452.3L644.8 458.3M644.8 444.0L654.0 443.3M644.8 451.1L654.0 450.0M644.8 444.0L654.0 436.7M644.8 444.0L654.0 450.0M644.8 451.1L654.0 456.6M654.0 443.3L663.2 442.8M654.0 450.0L663.2 448.9M654.0 436.7L663.2 442.8M654.0 443.3L663.2 448.9M654.0 450.0L663.2 455.0M663.2 445.9L672.4 445.2M663.2 436.7L672.4 445.2M663.2 445.9L672.4 453.5M672.4 445.2L681.6 444.6M672.4 445.2L681.6 437.0M672.4 445.2L681.6 452.2M681.6 444.6L690.8 444.2M681.6 437.0L690.8 444.2M681.6 444.6L690.8 450.8M690.8 444.2L700.0 444.0M690.8 437.6L700.0 444.0M690.8 444.2L700.0 449.4M700.0 449.4L709.2 439.4M709.2 439.4L718.4 447.0M718.4 441.1L727.6 445.9M727.6 445.9L735.0 445.0" stroke="#1c1c8c" stroke-width="0.9" fill="none"/><polyline points="270.0,388.0 270.5,385.0 273.0,381.0 278.2,377.3 287.0,371.8 309.0,361.9 331.0,354.2 353.0,348.7 375.0,345.0 397.0,342.1 419.0,340.3 441.0,339.5 463.0,339.2 485.0,340.6 496.0,342.0 512.0,344.6 528.0,347.8 540.0,352.3 735.0,445.0" stroke="#22229a" stroke-width="1.1" fill="none"/><polyline points="405.6,519.4 409.0,512.0 415.0,504.0 423.0,497.0 432.0,491.0 442.0,485.0 452.0,480.5 470.0,472.6 488.0,466.6 506.0,460.6 524.0,454.6 542.0,449.5 560.0,445.0 578.0,441.5 605.0,438.9 632.0,437.1 659.0,436.6 686.0,437.1 713.0,439.8 735.0,445.0" stroke="#22229a" stroke-width="1" fill="none"/><polyline points="405.6,521.5 406.8,523.0 424.4,520.6 442.0,515.9 459.7,510.0 470.0,506.8 500.0,497.2 530.0,488.8 560.0,479.0 596.0,468.6 632.0,460.5 668.0,454.2 704.0,448.8 735.0,445.0" stroke="#22229a" stroke-width="1.1" fill="none"/><path d="M268.5 391 Q330 450 406 523" stroke="#3a3aa0" stroke-width="0.7" fill="none"/><path d="M540 352.3 L735 445" stroke="#1a1a90" stroke-width="1.6" fill="none"/></g></svg>
<svg style="left:285px;top:550px;" width="50" height="55" viewBox="0 0 50 55"><path d="M11 39.6 L11 12" stroke="#d8c830" stroke-width="1.4"/><path d="M8.8 13 L11 6 L13.2 13Z" fill="#f0f000"/><path d="M11 39.6 L34 35.8" stroke="#d02020" stroke-width="1.2"/><path d="M31 33.5 L38 35 L31.5 38.5Z" fill="#a00000"/><path d="M11 39.6 L27 49" stroke="#10d010" stroke-width="1.2"/><path d="M24.5 46 L30.5 51.5 L22.5 51Z" fill="#10c010"/><text x="13" y="13" font-family="Liberation Sans" font-size="10" fill="#fff">Y</text><text x="35" y="36.5" font-family="Liberation Sans" font-size="9" fill="#fff">X</text><text x="27" y="49" font-family="Liberation Sans" font-size="9" fill="#fff">Z</text></svg>
<div style="left:757px;top:121px;width:97px;height:4px;background-image:radial-gradient(circle at 1px 1px,#c4c4c4 0.7px,transparent 1.1px),radial-gradient(circle at 3.3px 3px,#c4c4c4 0.7px,transparent 1.1px);background-size:4.6px 4px"></div>
<div style="left:875px;top:121px;width:97px;height:4px;background-image:radial-gradient(circle at 1px 1px,#c4c4c4 0.7px,transparent 1.1px),radial-gradient(circle at 3.3px 3px,#c4c4c4 0.7px,transparent 1.1px);background-size:4.6px 4px"></div>
<div class="t" style="left:663px;width:400px;text-align:center;top:120.17px;font-size:8.9px;line-height:8.9px;color:#1e1e1e;">BC</div>
<div style="left:974px;top:118.5px;width:10px;height:10px;border:1px solid #aaaaaa;border-radius:2px;background:linear-gradient(#fdfdfd,#e8e8e8)"></div>
<svg style="left:974px;top:118.5px;" width="10" height="10" viewBox="0 0 10 10"><rect x="4" y="2" width="4" height="4" fill="none" stroke="#666" stroke-width="0.9"/><rect x="2.3" y="4" width="4.4" height="4.2" fill="#fff" stroke="#111" stroke-width="1.2"/><rect x="3.7" y="1.8" width="4.6" height="1" fill="#111"/></svg>
<div style="left:986px;top:118.5px;width:10px;height:10px;border:1px solid #aaaaaa;border-radius:2px;background:linear-gradient(#fdfdfd,#e8e8e8)"></div>
<svg style="left:986px;top:118.5px;" width="10" height="10" viewBox="0 0 10 10"><path d="M2.3 2.3 L7.7 7.7 M7.7 2.3 L2.3 7.7" stroke="#111" stroke-width="1.3"/></svg>
<div style="left:759px;top:139px;width:241px;height:20px;border:1px solid #bdbdbd;border-right:none;border-radius:2px 0 0 2px;background:linear-gradient(#f0f0f0,#dadada)"></div>
<svg style="left:866px;top:142px;" width="14" height="14" viewBox="0 0 14 14"><path d="M1 5 L6 3 L11 5 L11 11 L6 13 L1 11Z" fill="#e6e6e6" stroke="#bbb" stroke-width="0.8"/><rect x="6.5" y="1.5" width="5" height="4" fill="#ddd" stroke="#bbb" stroke-width="0.7"/></svg>
<div class="t" style="left:881.5px;top:145.23px;font-size:10px;line-height:10px;color:#a6a6a6;">Apply BC</div>
<div style="left:760px;top:169px;width:240px;height:141px;border:1px solid #b4b4b4;border-right:none;border-radius:2px 0 0 2px"></div>
<div style="left:765px;top:163px;width:66px;height:12px;background:#eeeeee"></div>
<div class="t" style="left:767.5px;top:165.23px;font-size:10px;line-height:10px;color:#1e1e1e;">Region usage</div>
<svg style="left:764px;top:182px;" width="10" height="10" viewBox="0 0 10 10"><circle cx="5" cy="5" r="4.4" fill="#fbfbfb" stroke="#9c9c9c" stroke-width="0.9"/><circle cx="5" cy="5" r="2.2" fill="#000"/></svg>
<div class="t" style="left:779px;top:182.23px;font-size:10px;line-height:10px;color:#1e1e1e;">Not used</div>
<svg style="left:764px;top:200px;" width="10" height="10" viewBox="0 0 10 10"><circle cx="5" cy="5" r="4.4" fill="#fbfbfb" stroke="#9c9c9c" stroke-width="0.9"/></svg>
<div class="t" style="left:779px;top:200.23px;font-size:10px;line-height:10px;color:#1e1e1e;">Fluid</div>
<svg style="left:764px;top:219px;" width="10" height="10" viewBox="0 0 10 10"><circle cx="5" cy="5" r="4.4" fill="#fbfbfb" stroke="#9c9c9c" stroke-width="0.9"/></svg>
<div class="t" style="left:779px;top:219.03px;font-size:10px;line-height:10px;color:#1e1e1e;">Solid</div>
<svg style="left:764px;top:274px;" width="10" height="10" viewBox="0 0 10 10"><circle cx="5" cy="5" r="4.4" fill="#fbfbfb" stroke="#9c9c9c" stroke-width="0.9"/></svg>
<div class="t" style="left:779px;top:274.24px;font-size:10px;line-height:10px;color:#1e1e1e;">Measurement</div>
<div style="left:764px;top:292px;width:10px;height:10px;border:1px solid #9c9c9c;border-radius:1px;background:linear-gradient(#fff,#ececec)"></div>
<div class="t" style="left:778.5px;top:292.24px;font-size:10px;line-height:10px;color:#1e1e1e;">VR</div>
<div style="left:848px;top:197px;width:74px;height:15px;border:1px solid #c0c0c0;border-radius:2px;background:linear-gradient(#e9e9e9,#dcdcdc)"></div>
<div style="left:909px;top:198px;width:1px;height:13px;background:#c8c8c8"></div>
<svg style="left:911.5px;top:202.5px;" width="8" height="4" viewBox="0 0 8 4"><path d="M0.5 0.5 L7.5 0.5 L4 3.8Z" fill="#a0a0a0"/></svg>
<div class="t" style="left:851.5px;top:200.23px;font-size:10px;line-height:10px;color:#a8a8a8;">Select fluid</div>
<div style="left:925px;top:197px;width:75px;height:15px;border:1px solid #c0c0c0;border-right:none;border-radius:2px 0 0 2px;background:linear-gradient(#e9e9e9,#dcdcdc)"></div>
<div class="t" style="left:928.5px;top:200.23px;font-size:10px;line-height:10px;color:#a8a8a8;">Select IC</div>
<div style="left:848px;top:218px;width:10px;height:10px;border:1px solid #c0c0c0;border-radius:1px;background:#efefef"></div>
<div class="t" style="left:862px;top:218.73px;font-size:10px;line-height:10px;color:#a8a8a8;">Inverted</div>
<div style="left:848px;top:234px;width:74px;height:15px;border:1px solid #c0c0c0;border-radius:2px;background:linear-gradient(#e9e9e9,#dcdcdc)"></div>
<div style="left:909px;top:235px;width:1px;height:13px;background:#c8c8c8"></div>
<svg style="left:911.5px;top:239.5px;" width="8" height="4" viewBox="0 0 8 4"><path d="M0.5 0.5 L7.5 0.5 L4 3.8Z" fill="#a0a0a0"/></svg>
<div class="t" style="left:851.5px;top:237.23px;font-size:10px;line-height:10px;color:#a8a8a8;">Select wall</div>
<div style="left:925px;top:234px;width:75px;height:15px;border:1px solid #c0c0c0;border-right:none;border-radius:2px 0 0 2px;background:linear-gradient(#e9e9e9,#dcdcdc)"></div>
<div class="t" style="left:928.5px;top:237.23px;font-size:10px;line-height:10px;color:#a8a8a8;">No BC</div>
<div style="left:848px;top:255px;width:10px;height:10px;border:1px solid #c0c0c0;border-radius:1px;background:#efefef"></div>
<div class="t" style="left:862px;top:255.73px;font-size:10px;line-height:10px;color:#a8a8a8;">Moving</div>
<div style="left:925px;top:253px;width:75px;height:15px;border:1px solid #c0c0c0;border-right:none;border-radius:2px 0 0 2px;background:linear-gradient(#e9e9e9,#dcdcdc)"></div>
<div class="t" style="left:928.5px;top:256.24px;font-size:10px;line-height:10px;color:#a8a8a8;">Select movement</div>
<div style="left:848px;top:290px;width:74px;height:15px;border:1px solid #c0c0c0;border-radius:2px;background:linear-gradient(#e9e9e9,#dcdcdc)"></div>
<div style="left:909px;top:291px;width:1px;height:13px;background:#c8c8c8"></div>
<svg style="left:911.5px;top:295.5px;" width="8" height="4" viewBox="0 0 8 4"><path d="M0.5 0.5 L7.5 0.5 L4 3.8Z" fill="#a0a0a0"/></svg>
<div class="t" style="left:851.5px;top:293.24px;font-size:10px;line-height:10px;color:#a8a8a8;">Select level</div>
<div style="left:760px;top:319px;width:240px;height:317px;border:1px solid #b4b4b4;border-right:none;border-radius:2px 0 0 2px"></div>
<div style="left:765px;top:313px;width:152px;height:12px;background:#eeeeee"></div>
<div class="t" style="left:767.5px;top:315.24px;font-size:10px;line-height:10px;color:#1e1e1e;">Face usage (double click to edit)</div>
<div style="left:764px;top:330px;width:236px;height:302px;border:1px solid #a0a0a0;border-right:none;background:#fff"></div>
<div style="left:765px;top:331px;width:62px;height:17px;border-right:1px solid #a8a8a8;border-bottom:1px solid #a8a8a8;background:linear-gradient(#f6f6f6,#dcdcdc)"></div>
<div class="t" style="left:783px;top:335.24px;font-size:10px;line-height:10px;color:#1e1e1e;">Name</div>
<div style="left:827px;top:331px;width:61px;height:17px;border-right:1px solid #a8a8a8;border-bottom:1px solid #a8a8a8;background:linear-gradient(#f6f6f6,#dcdcdc)"></div>
<div class="t" style="left:851px;top:335.24px;font-size:10px;line-height:10px;color:#1e1e1e;">VR</div>
<div style="left:888px;top:331px;width:62px;height:17px;border-right:1px solid #a8a8a8;border-bottom:1px solid #a8a8a8;background:linear-gradient(#f6f6f6,#dcdcdc)"></div>
<div class="t" style="left:909px;top:335.24px;font-size:10px;line-height:10px;color:#1e1e1e;">Type</div>
<div style="left:950px;top:331px;width:50px;height:17px;border-right:1px solid #a8a8a8;border-bottom:1px solid #a8a8a8;background:linear-gradient(#f6f6f6,#dcdcdc)"></div>
<div class="t" style="left:968px;top:335.24px;font-size:10px;line-height:10px;color:#1e1e1e;">Value</div>
<div style="left:765px;top:618px;width:235px;height:13px;background:#f3f3f3"></div>
<div style="left:766px;top:618px;width:12px;height:13px;border:1px solid #a8a8a8;border-radius:2px;background:linear-gradient(#f8f8f8,#dedede)"></div>
<svg style="left:766px;top:618px;" width="12" height="13" viewBox="0 0 12 13"><path d="M7.5 3.5 L7.5 9.5 L3.5 6.5Z" fill="#111"/></svg>
<div style="left:778px;top:618px;width:177px;height:13px;border:1px solid #a8a8a8;border-radius:2px;background:linear-gradient(#f8f8f8,#dedede)"></div>
<svg style="left:860px;top:621px;" width="13" height="7" viewBox="0 0 13 7"><circle cx="1.0" cy="1.0" r="0.6" fill="#bbb"/><circle cx="1.0" cy="3.2" r="0.6" fill="#bbb"/><circle cx="1.0" cy="5.4" r="0.6" fill="#bbb"/><circle cx="3.2" cy="1.0" r="0.6" fill="#bbb"/><circle cx="3.2" cy="3.2" r="0.6" fill="#bbb"/><circle cx="3.2" cy="5.4" r="0.6" fill="#bbb"/><circle cx="5.4" cy="1.0" r="0.6" fill="#bbb"/><circle cx="5.4" cy="3.2" r="0.6" fill="#bbb"/><circle cx="5.4" cy="5.4" r="0.6" fill="#bbb"/><circle cx="7.6" cy="1.0" r="0.6" fill="#bbb"/><circle cx="7.6" cy="3.2" r="0.6" fill="#bbb"/><circle cx="7.6" cy="5.4" r="0.6" fill="#bbb"/><circle cx="9.8" cy="1.0" r="0.6" fill="#bbb"/><circle cx="9.8" cy="3.2" r="0.6" fill="#bbb"/><circle cx="9.8" cy="5.4" r="0.6" fill="#bbb"/><circle cx="12.0" cy="1.0" r="0.6" fill="#bbb"/><circle cx="12.0" cy="3.2" r="0.6" fill="#bbb"/><circle cx="12.0" cy="5.4" r="0.6" fill="#bbb"/></svg>
<div style="left:753px;top:644px;width:247px;height:12px;background:#f3f3f3"></div>
<div style="left:753px;top:644px;width:12px;height:12px;border:1px solid #a8a8a8;border-radius:2px;background:linear-gradient(#f8f8f8,#dedede)"></div>
<svg style="left:753px;top:644px;" width="12" height="12" viewBox="0 0 12 12"><path d="M7.5 3 L7.5 9 L3.5 6Z" fill="#111"/></svg>
<div style="left:765px;top:644px;width:178px;height:12px;border:1px solid #a8a8a8;border-radius:2px;background:linear-gradient(#f8f8f8,#dedede)"></div>
<svg style="left:848px;top:647px;" width="13" height="7" viewBox="0 0 13 7"><circle cx="1.0" cy="1.0" r="0.6" fill="#bbb"/><circle cx="1.0" cy="3.2" r="0.6" fill="#bbb"/><circle cx="1.0" cy="5.4" r="0.6" fill="#bbb"/><circle cx="3.2" cy="1.0" r="0.6" fill="#bbb"/><circle cx="3.2" cy="3.2" r="0.6" fill="#bbb"/><circle cx="3.2" cy="5.4" r="0.6" fill="#bbb"/><circle cx="5.4" cy="1.0" r="0.6" fill="#bbb"/><circle cx="5.4" cy="3.2" r="0.6" fill="#bbb"/><circle cx="5.4" cy="5.4" r="0.6" fill="#bbb"/><circle cx="7.6" cy="1.0" r="0.6" fill="#bbb"/><circle cx="7.6" cy="3.2" r="0.6" fill="#bbb"/><circle cx="7.6" cy="5.4" r="0.6" fill="#bbb"/><circle cx="9.8" cy="1.0" r="0.6" fill="#bbb"/><circle cx="9.8" cy="3.2" r="0.6" fill="#bbb"/><circle cx="9.8" cy="5.4" r="0.6" fill="#bbb"/><circle cx="12.0" cy="1.0" r="0.6" fill="#bbb"/><circle cx="12.0" cy="3.2" r="0.6" fill="#bbb"/><circle cx="12.0" cy="5.4" r="0.6" fill="#bbb"/></svg>
<div style="left:973px;top:644px;width:12px;height:12px;border:1px solid #a8a8a8;border-radius:2px;background:linear-gradient(#f8f8f8,#dedede)"></div>
<svg style="left:973px;top:644px;" width="12" height="12" viewBox="0 0 12 12"><path d="M7.5 3 L7.5 9 L3.5 6Z" fill="#111"/></svg>
<div style="left:985px;top:644px;width:12px;height:12px;border:1px solid #a8a8a8;border-radius:2px;background:linear-gradient(#f8f8f8,#dedede)"></div>
<svg style="left:985px;top:644px;" width="12" height="12" viewBox="0 0 12 12"><path d="M4.5 3 L4.5 9 L8.5 6Z" fill="#111"/></svg>
<svg style="left:749px;top:296px;" width="3" height="174" viewBox="0 0 3 174"><rect x="0.5" y="0.0" width="1.2" height="1.2" fill="#b8b8b8"/><rect x="1.5" y="1.1" width="1" height="1" fill="#fff"/><rect x="0.5" y="3.9" width="1.2" height="1.2" fill="#b8b8b8"/><rect x="1.5" y="5.0" width="1" height="1" fill="#fff"/><rect x="0.5" y="7.7" width="1.2" height="1.2" fill="#b8b8b8"/><rect x="1.5" y="8.8" width="1" height="1" fill="#fff"/><rect x="0.5" y="11.6" width="1.2" height="1.2" fill="#b8b8b8"/><rect x="1.5" y="12.7" width="1" height="1" fill="#fff"/><rect x="0.5" y="15.4" width="1.2" height="1.2" fill="#b8b8b8"/><rect x="1.5" y="16.5" width="1" height="1" fill="#fff"/><rect x="0.5" y="19.2" width="1.2" height="1.2" fill="#b8b8b8"/><rect x="1.5" y="20.4" width="1" height="1" fill="#fff"/><rect x="0.5" y="23.1" width="1.2" height="1.2" fill="#b8b8b8"/><rect x="1.5" y="24.2" width="1" height="1" fill="#fff"/><rect x="0.5" y="26.9" width="1.2" height="1.2" fill="#b8b8b8"/><rect x="1.5" y="28.1" width="1" height="1" fill="#fff"/><rect x="0.5" y="30.8" width="1.2" height="1.2" fill="#b8b8b8"/><rect x="1.5" y="31.9" width="1" height="1" fill="#fff"/><rect x="0.5" y="34.6" width="1.2" height="1.2" fill="#b8b8b8"/><rect x="1.5" y="35.8" width="1" height="1" fill="#fff"/><rect x="0.5" y="38.5" width="1.2" height="1.2" fill="#b8b8b8"/><rect x="1.5" y="39.6" width="1" height="1" fill="#fff"/><rect x="0.5" y="42.4" width="1.2" height="1.2" fill="#b8b8b8"/><rect x="1.5" y="43.5" width="1" height="1" fill="#fff"/><rect x="0.5" y="46.2" width="1.2" height="1.2" fill="#b8b8b8"/><rect x="1.5" y="47.3" width="1" height="1" fill="#fff"/><rect x="0.5" y="50.1" width="1.2" height="1.2" fill="#b8b8b8"/><rect x="1.5" y="51.2" width="1" height="1" fill="#fff"/><rect x="0.5" y="53.9" width="1.2" height="1.2" fill="#b8b8b8"/><rect x="1.5" y="55.0" width="1" height="1" fill="#fff"/><rect x="0.5" y="57.8" width="1.2" height="1.2" fill="#b8b8b8"/><rect x="1.5" y="58.9" width="1" height="1" fill="#fff"/><rect x="0.5" y="61.6" width="1.2" height="1.2" fill="#b8b8b8"/><rect x="1.5" y="62.7" width="1" height="1" fill="#fff"/><rect x="0.5" y="65.5" width="1.2" height="1.2" fill="#b8b8b8"/><rect x="1.5" y="66.5" width="1" height="1" fill="#fff"/><rect x="0.5" y="69.3" width="1.2" height="1.2" fill="#b8b8b8"/><rect x="1.5" y="70.4" width="1" height="1" fill="#fff"/><rect x="0.5" y="73.2" width="1.2" height="1.2" fill="#b8b8b8"/><rect x="1.5" y="74.2" width="1" height="1" fill="#fff"/><rect x="0.5" y="77.0" width="1.2" height="1.2" fill="#b8b8b8"/><rect x="1.5" y="78.1" width="1" height="1" fill="#fff"/><rect x="0.5" y="80.9" width="1.2" height="1.2" fill="#b8b8b8"/><rect x="1.5" y="82.0" width="1" height="1" fill="#fff"/><rect x="0.5" y="84.7" width="1.2" height="1.2" fill="#b8b8b8"/><rect x="1.5" y="85.8" width="1" height="1" fill="#fff"/><rect x="0.5" y="88.5" width="1.2" height="1.2" fill="#b8b8b8"/><rect x="1.5" y="89.6" width="1" height="1" fill="#fff"/><rect x="0.5" y="92.4" width="1.2" height="1.2" fill="#b8b8b8"/><rect x="1.5" y="93.5" width="1" height="1" fill="#fff"/><rect x="0.5" y="96.2" width="1.2" height="1.2" fill="#b8b8b8"/><rect x="1.5" y="97.3" width="1" height="1" fill="#fff"/><rect x="0.5" y="100.1" width="1.2" height="1.2" fill="#b8b8b8"/><rect x="1.5" y="101.2" width="1" height="1" fill="#fff"/><rect x="0.5" y="104.0" width="1.2" height="1.2" fill="#b8b8b8"/><rect x="1.5" y="105.0" width="1" height="1" fill="#fff"/><rect x="0.5" y="107.8" width="1.2" height="1.2" fill="#b8b8b8"/><rect x="1.5" y="108.9" width="1" height="1" fill="#fff"/><rect x="0.5" y="111.7" width="1.2" height="1.2" fill="#b8b8b8"/><rect x="1.5" y="112.8" width="1" height="1" fill="#fff"/><rect x="0.5" y="115.5" width="1.2" height="1.2" fill="#b8b8b8"/><rect x="1.5" y="116.6" width="1" height="1" fill="#fff"/><rect x="0.5" y="119.4" width="1.2" height="1.2" fill="#b8b8b8"/><rect x="1.5" y="120.5" width="1" height="1" fill="#fff"/><rect x="0.5" y="123.2" width="1.2" height="1.2" fill="#b8b8b8"/><rect x="1.5" y="124.3" width="1" height="1" fill="#fff"/><rect x="0.5" y="127.0" width="1.2" height="1.2" fill="#b8b8b8"/><rect x="1.5" y="128.2" width="1" height="1" fill="#fff"/><rect x="0.5" y="130.9" width="1.2" height="1.2" fill="#b8b8b8"/><rect x="1.5" y="132.0" width="1" height="1" fill="#fff"/><rect x="0.5" y="134.8" width="1.2" height="1.2" fill="#b8b8b8"/><rect x="1.5" y="135.8" width="1" height="1" fill="#fff"/><rect x="0.5" y="138.6" width="1.2" height="1.2" fill="#b8b8b8"/><rect x="1.5" y="139.7" width="1" height="1" fill="#fff"/><rect x="0.5" y="142.5" width="1.2" height="1.2" fill="#b8b8b8"/><rect x="1.5" y="143.6" width="1" height="1" fill="#fff"/><rect x="0.5" y="146.3" width="1.2" height="1.2" fill="#b8b8b8"/><rect x="1.5" y="147.4" width="1" height="1" fill="#fff"/><rect x="0.5" y="150.2" width="1.2" height="1.2" fill="#b8b8b8"/><rect x="1.5" y="151.2" width="1" height="1" fill="#fff"/><rect x="0.5" y="154.0" width="1.2" height="1.2" fill="#b8b8b8"/><rect x="1.5" y="155.1" width="1" height="1" fill="#fff"/><rect x="0.5" y="157.8" width="1.2" height="1.2" fill="#b8b8b8"/><rect x="1.5" y="158.9" width="1" height="1" fill="#fff"/><rect x="0.5" y="161.7" width="1.2" height="1.2" fill="#b8b8b8"/><rect x="1.5" y="162.8" width="1" height="1" fill="#fff"/><rect x="0.5" y="165.6" width="1.2" height="1.2" fill="#b8b8b8"/><rect x="1.5" y="166.7" width="1" height="1" fill="#fff"/><rect x="0.5" y="169.4" width="1.2" height="1.2" fill="#b8b8b8"/><rect x="1.5" y="170.5" width="1" height="1" fill="#fff"/></svg>
<svg style="left:226.5px;top:296px;" width="3" height="174" viewBox="0 0 3 174"><rect x="0.5" y="0.0" width="1.2" height="1.2" fill="#b8b8b8"/><rect x="1.5" y="1.1" width="1" height="1" fill="#fff"/><rect x="0.5" y="3.9" width="1.2" height="1.2" fill="#b8b8b8"/><rect x="1.5" y="5.0" width="1" height="1" fill="#fff"/><rect x="0.5" y="7.7" width="1.2" height="1.2" fill="#b8b8b8"/><rect x="1.5" y="8.8" width="1" height="1" fill="#fff"/><rect x="0.5" y="11.6" width="1.2" height="1.2" fill="#b8b8b8"/><rect x="1.5" y="12.7" width="1" height="1" fill="#fff"/><rect x="0.5" y="15.4" width="1.2" height="1.2" fill="#b8b8b8"/><rect x="1.5" y="16.5" width="1" height="1" fill="#fff"/><rect x="0.5" y="19.2" width="1.2" height="1.2" fill="#b8b8b8"/><rect x="1.5" y="20.4" width="1" height="1" fill="#fff"/><rect x="0.5" y="23.1" width="1.2" height="1.2" fill="#b8b8b8"/><rect x="1.5" y="24.2" width="1" height="1" fill="#fff"/><rect x="0.5" y="26.9" width="1.2" height="1.2" fill="#b8b8b8"/><rect x="1.5" y="28.1" width="1" height="1" fill="#fff"/><rect x="0.5" y="30.8" width="1.2" height="1.2" fill="#b8b8b8"/><rect x="1.5" y="31.9" width="1" height="1" fill="#fff"/><rect x="0.5" y="34.6" width="1.2" height="1.2" fill="#b8b8b8"/><rect x="1.5" y="35.8" width="1" height="1" fill="#fff"/><rect x="0.5" y="38.5" width="1.2" height="1.2" fill="#b8b8b8"/><rect x="1.5" y="39.6" width="1" height="1" fill="#fff"/><rect x="0.5" y="42.4" width="1.2" height="1.2" fill="#b8b8b8"/><rect x="1.5" y="43.5" width="1" height="1" fill="#fff"/><rect x="0.5" y="46.2" width="1.2" height="1.2" fill="#b8b8b8"/><rect x="1.5" y="47.3" width="1" height="1" fill="#fff"/><rect x="0.5" y="50.1" width="1.2" height="1.2" fill="#b8b8b8"/><rect x="1.5" y="51.2" width="1" height="1" fill="#fff"/><rect x="0.5" y="53.9" width="1.2" height="1.2" fill="#b8b8b8"/><rect x="1.5" y="55.0" width="1" height="1" fill="#fff"/><rect x="0.5" y="57.8" width="1.2" height="1.2" fill="#b8b8b8"/><rect x="1.5" y="58.9" width="1" height="1" fill="#fff"/><rect x="0.5" y="61.6" width="1.2" height="1.2" fill="#b8b8b8"/><rect x="1.5" y="62.7" width="1" height="1" fill="#fff"/><rect x="0.5" y="65.5" width="1.2" height="1.2" fill="#b8b8b8"/><rect x="1.5" y="66.5" width="1" height="1" fill="#fff"/><rect x="0.5" y="69.3" width="1.2" height="1.2" fill="#b8b8b8"/><rect x="1.5" y="70.4" width="1" height="1" fill="#fff"/><rect x="0.5" y="73.2" width="1.2" height="1.2" fill="#b8b8b8"/><rect x="1.5" y="74.2" width="1" height="1" fill="#fff"/><rect x="0.5" y="77.0" width="1.2" height="1.2" fill="#b8b8b8"/><rect x="1.5" y="78.1" width="1" height="1" fill="#fff"/><rect x="0.5" y="80.9" width="1.2" height="1.2" fill="#b8b8b8"/><rect x="1.5" y="82.0" width="1" height="1" fill="#fff"/><rect x="0.5" y="84.7" width="1.2" height="1.2" fill="#b8b8b8"/><rect x="1.5" y="85.8" width="1" height="1" fill="#fff"/><rect x="0.5" y="88.5" width="1.2" height="1.2" fill="#b8b8b8"/><rect x="1.5" y="89.6" width="1" height="1" fill="#fff"/><rect x="0.5" y="92.4" width="1.2" height="1.2" fill="#b8b8b8"/><rect x="1.5" y="93.5" width="1" height="1" fill="#fff"/><rect x="0.5" y="96.2" width="1.2" height="1.2" fill="#b8b8b8"/><rect x="1.5" y="97.3" width="1" height="1" fill="#fff"/><rect x="0.5" y="100.1" width="1.2" height="1.2" fill="#b8b8b8"/><rect x="1.5" y="101.2" width="1" height="1" fill="#fff"/><rect x="0.5" y="104.0" width="1.2" height="1.2" fill="#b8b8b8"/><rect x="1.5" y="105.0" width="1" height="1" fill="#fff"/><rect x="0.5" y="107.8" width="1.2" height="1.2" fill="#b8b8b8"/><rect x="1.5" y="108.9" width="1" height="1" fill="#fff"/><rect x="0.5" y="111.7" width="1.2" height="1.2" fill="#b8b8b8"/><rect x="1.5" y="112.8" width="1" height="1" fill="#fff"/><rect x="0.5" y="115.5" width="1.2" height="1.2" fill="#b8b8b8"/><rect x="1.5" y="116.6" width="1" height="1" fill="#fff"/><rect x="0.5" y="119.4" width="1.2" height="1.2" fill="#b8b8b8"/><rect x="1.5" y="120.5" width="1" height="1" fill="#fff"/><rect x="0.5" y="123.2" width="1.2" height="1.2" fill="#b8b8b8"/><rect x="1.5" y="124.3" width="1" height="1" fill="#fff"/><rect x="0.5" y="127.0" width="1.2" height="1.2" fill="#b8b8b8"/><rect x="1.5" y="128.2" width="1" height="1" fill="#fff"/><rect x="0.5" y="130.9" width="1.2" height="1.2" fill="#b8b8b8"/><rect x="1.5" y="132.0" width="1" height="1" fill="#fff"/><rect x="0.5" y="134.8" width="1.2" height="1.2" fill="#b8b8b8"/><rect x="1.5" y="135.8" width="1" height="1" fill="#fff"/><rect x="0.5" y="138.6" width="1.2" height="1.2" fill="#b8b8b8"/><rect x="1.5" y="139.7" width="1" height="1" fill="#fff"/><rect x="0.5" y="142.5" width="1.2" height="1.2" fill="#b8b8b8"/><rect x="1.5" y="143.6" width="1" height="1" fill="#fff"/><rect x="0.5" y="146.3" width="1.2" height="1.2" fill="#b8b8b8"/><rect x="1.5" y="147.4" width="1" height="1" fill="#fff"/><rect x="0.5" y="150.2" width="1.2" height="1.2" fill="#b8b8b8"/><rect x="1.5" y="151.2" width="1" height="1" fill="#fff"/><rect x="0.5" y="154.0" width="1.2" height="1.2" fill="#b8b8b8"/><rect x="1.5" y="155.1" width="1" height="1" fill="#fff"/><rect x="0.5" y="157.8" width="1.2" height="1.2" fill="#b8b8b8"/><rect x="1.5" y="158.9" width="1" height="1" fill="#fff"/><rect x="0.5" y="161.7" width="1.2" height="1.2" fill="#b8b8b8"/><rect x="1.5" y="162.8" width="1" height="1" fill="#fff"/><rect x="0.5" y="165.6" width="1.2" height="1.2" fill="#b8b8b8"/><rect x="1.5" y="166.7" width="1" height="1" fill="#fff"/><rect x="0.5" y="169.4" width="1.2" height="1.2" fill="#b8b8b8"/><rect x="1.5" y="170.5" width="1" height="1" fill="#fff"/></svg>
<div style="left:490px;top:658px;width:19px;height:18px;border:1px solid #a0a0a0;border-radius:2px;background:linear-gradient(#fafafa,#e6e6e6)"></div>
<svg style="left:490px;top:658px;" width="19" height="18" viewBox="0 0 19 18"><path d="M6.5 6 L12.5 12 M12.5 6 L6.5 12" stroke="#a8a8a8" stroke-width="2.2"/></svg>
<div style="left:509px;top:658px;width:466px;height:18px;border:1px solid #a0a0a0;border-radius:2px;background:#eeeeee"></div>
<div style="left:975px;top:659px;width:3px;height:16px;border-left:1px solid #b8b8b8;background:#fff"></div>
<svg style="left:985px;top:665px;" width="13" height="13" viewBox="0 0 13 13"><path d="M3 12 L12 3 M6.5 12 L12 6.5 M10 12 L12 10" stroke="#555" stroke-width="1.3" stroke-dasharray="1.2 0.8"/></svg>
<div style="left:997px;top:19px;width:1px;height:660px;background:#ececec"></div>
<div style="left:998px;top:19px;width:1px;height:660px;background:#bdbbb8"></div>
<div style="left:999px;top:18px;width:1px;height:662px;background:#7a7672"></div>
<div style="left:0px;top:679px;width:1000px;height:1px;background:#7a7672"></div></body></html>
